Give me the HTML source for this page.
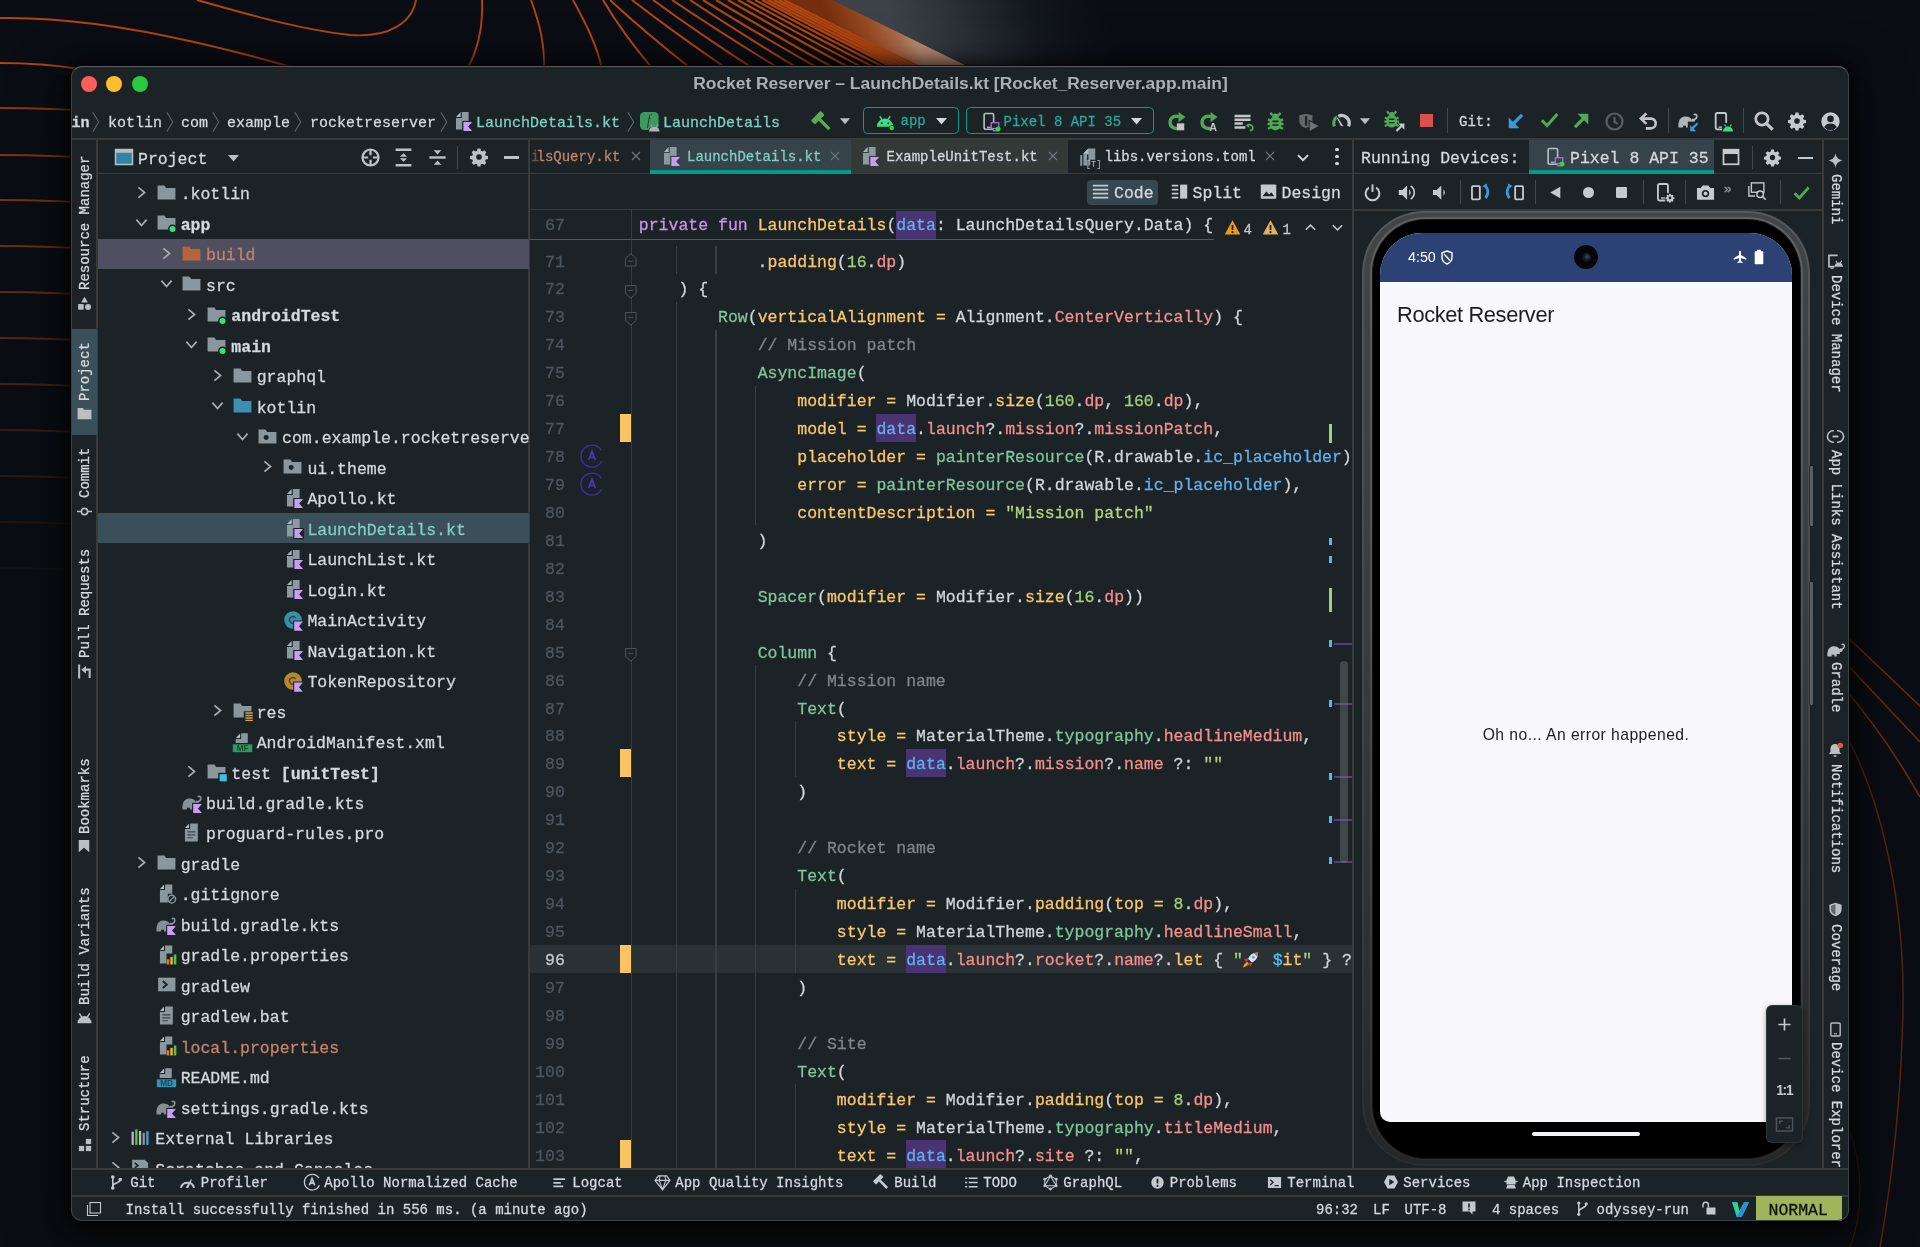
<!DOCTYPE html>
<html><head><meta charset="utf-8"><title>Rocket Reserver</title><style>
html,body{margin:0;padding:0}
body{width:1920px;height:1247px;overflow:hidden;background:#0a0d13;position:relative;font-family:"Liberation Mono", monospace;}
.t{position:absolute;white-space:pre;font-family:"Liberation Mono", monospace;-webkit-text-stroke:.28px currentColor;}
.s{position:absolute;white-space:pre;font-family:"Liberation Sans", sans-serif;}
.r{position:absolute;}
.i{position:absolute;overflow:visible}
#win{position:absolute;left:71.300px;top:66.200px;width:1777.800px;height:1155.200px;border-radius:11px;background:#1c2327;overflow:hidden;}
#in{position:absolute;left:-71.300px;top:-66.200px;width:1920px;height:1247px;will-change:transform;}
#winb{position:absolute;left:71.300px;top:66.200px;width:1777.800px;height:1155.200px;border-radius:11px;box-sizing:border-box;border:1.300px solid #3b4246;border-top-color:#585e62;pointer-events:none}
#shadow{position:absolute;left:71.300px;top:66.200px;width:1777.800px;height:1155.200px;border-radius:11px;box-shadow:0 18px 50px 10px rgba(0,0,0,.5),0 0 16px 5px rgba(0,0,0,.6),0 0 0 1px rgba(0,0,0,.75);}
b{font-weight:bold}
</style></head><body>
<svg class="i" style="left:0;top:0" width="1920" height="1247" viewBox="0 0 1920 1247">
<defs>
<linearGradient id="gsil" gradientUnits="userSpaceOnUse" x1="900" y1="40" x2="1090" y2="-30"><stop offset="0" stop-color="#3c4248"/><stop offset=".3" stop-color="#2a3036"/><stop offset=".65" stop-color="#13171e"/><stop offset="1" stop-color="#0a0d13"/></linearGradient>
<linearGradient id="gor" gradientUnits="userSpaceOnUse" x1="835" y1="40" x2="905" y2="14"><stop offset="0" stop-color="#742d0f"/><stop offset=".45" stop-color="#96481f"/><stop offset=".8" stop-color="#ab6b4b"/><stop offset="1" stop-color="#b88a70"/></linearGradient>
<linearGradient id="gfade" x1="0" y1="0" x2="0" y2="1"><stop offset="0" stop-color="#fff"/><stop offset=".45" stop-color="#fff" stop-opacity=".6"/><stop offset="1" stop-color="#fff" stop-opacity="0"/></linearGradient>
<mask id="mfade"><rect x="0" y="0" width="80" height="600" fill="url(#gfade)"/></mask>
<radialGradient id="gvig" cx=".5" cy=".5" r=".75"><stop offset=".7" stop-color="#000" stop-opacity="0"/><stop offset="1" stop-color="#000" stop-opacity=".25"/></radialGradient>
</defs>
<rect width="1920" height="1247" fill="#0a0e14"/>
<path d="M800 0 L960 70 L1230 70 L1150 0Z" fill="url(#gsil)"/>
<path d="M762 0 L895 70 L975 70 L832 0Z" fill="url(#gor)"/>
<path d="M603 0 Q622.3 33 653.6 70" fill="none" stroke="#b2440e" stroke-width="2.1"/>
<path d="M610 0 Q645.5 33 692.9 70" fill="none" stroke="#b2440e" stroke-width="2.1"/>
<path d="M632 0 Q674.5 33 728.9 70" fill="none" stroke="#b2440e" stroke-width="2.1"/>
<path d="M653 0 Q698.2 33 755.3 70" fill="none" stroke="#b2440e" stroke-width="2.1"/>
<path d="M672 0 Q720.9 33 781.8 70" fill="none" stroke="#b2440e" stroke-width="2.1"/>
<path d="M690 0 Q739.5 33 800.9 70" fill="none" stroke="#b2440e" stroke-width="2.1"/>
<path d="M703 0 Q756.2 33 821.5 70" fill="none" stroke="#b2440e" stroke-width="2.1"/>
<path d="M716 0 Q770.8 33 837.7 70" fill="none" stroke="#b2440e" stroke-width="2.1"/>
<path d="M728 0 Q785.0 33 854.0 70" fill="none" stroke="#b2440e" stroke-width="2.1"/>
<path d="M738 0 Q796.6 33 867.2 70" fill="none" stroke="#b2440e" stroke-width="2.1"/>
<path d="M747 0 Q807.2 33 879.5 70" fill="none" stroke="#b2440e" stroke-width="2.1"/>
<path d="M755 0 Q816.3 33 889.6 70" fill="none" stroke="#b2440e" stroke-width="2.1"/>
<path d="M762 0 Q824.4 33 898.8 70" fill="none" stroke="#b2440e" stroke-width="2.1"/>
<path d="M768 0 Q831.5 33 906.9 70" fill="none" stroke="#b2440e" stroke-width="2.1"/>
<path d="M774 0 Q838.0 33 914.0 70" fill="none" stroke="#b2440e" stroke-width="2.1"/>
<path d="M779 0 Q843.5 33 920.1 70" fill="none" stroke="#b2440e" stroke-width="2.1"/>
<path d="M784 0 Q849.1 33 926.2 70" fill="none" stroke="#b2440e" stroke-width="2.1"/>
<path d="M0 18 C60 17 120 25 194 42 S270 62 300 69" fill="none" stroke="#b2440e" stroke-width="1.9"/>
<path d="M197 0 C240 12 300 30 350 35 C390 38 412 22 416 0" fill="none" stroke="#b2440e" stroke-width="1.9"/>
<path d="M482 0 C483 25 478 50 467 69" fill="none" stroke="#b2440e" stroke-width="1.9"/>
<path d="M531 0 C540 25 545 45 544 69" fill="none" stroke="#b2440e" stroke-width="1.9"/>
<path d="M573 0 C585 22 597 45 602 69" fill="none" stroke="#b2440e" stroke-width="1.9"/>
<path d="M0 63 C30 63 55 65 80 69" fill="none" stroke="#b2440e" stroke-width="1.9"/>
<g mask="url(#mfade)">
<path d="M0 108 C30 108 50 109 80 110" fill="none" stroke="#a8400e" stroke-width="1.8"/>
<path d="M0 155 C30 155 50 156 80 157" fill="none" stroke="#a8400e" stroke-width="1.8"/>
<path d="M0 200 C30 200 50 201 80 202" fill="none" stroke="#a8400e" stroke-width="1.8"/>
<path d="M0 246 C30 246 50 247 80 248" fill="none" stroke="#a8400e" stroke-width="1.8"/>
<path d="M0 292 C30 292 50 293 80 294" fill="none" stroke="#a8400e" stroke-width="1.8"/>
<path d="M0 338 C30 338 50 339 80 340" fill="none" stroke="#a8400e" stroke-width="1.8"/>
<path d="M0 384 C30 384 50 385 80 386" fill="none" stroke="#a8400e" stroke-width="1.8"/>
<path d="M0 430 C30 430 50 431 80 432" fill="none" stroke="#a8400e" stroke-width="1.8"/>
<path d="M0 476 C30 476 50 477 80 478" fill="none" stroke="#a8400e" stroke-width="1.8"/>
<path d="M0 522 C30 522 50 523 80 524" fill="none" stroke="#a8400e" stroke-width="1.8"/>
<path d="M0 568 C30 568 50 569 80 570" fill="none" stroke="#a8400e" stroke-width="1.8"/>
</g>
<path d="M1840 630 L1920 706" fill="none" stroke="#6e2a0e" stroke-width="1.6"/>
<path d="M1840 657 L1920 742" fill="none" stroke="#6e2a0e" stroke-width="1.6"/>
<path d="M1840 683 Q1885 735 1920 797" fill="none" stroke="#6e2a0e" stroke-width="1.6"/>
<path d="M1840 725 C1880 790 1905 900 1903 1010 C1901 1100 1892 1180 1880 1247" fill="none" stroke="#6e2a0e" stroke-width="1.5" opacity=".8"/>
<path d="M1849 1130 C1865 1170 1862 1215 1850 1247" fill="none" stroke="#6e2a0e" stroke-width="1.2" opacity=".45"/>
</svg>
<div id="shadow"></div>
<div id="win"><div id="in">
<div class="r" style="left:80.9px;top:75.9px;width:16px;height:16px;border-radius:50%;background:#fe5f57"></div>
<div class="r" style="left:106.2px;top:75.9px;width:16px;height:16px;border-radius:50%;background:#febc2e"></div>
<div class="r" style="left:131.5px;top:75.9px;width:16px;height:16px;border-radius:50%;background:#28c840"></div>
<div class="s" style="left:72px;width:1777px;top:71.200px;height:24px;line-height:24px;text-align:center;font-size:17.400px;font-weight:bold;color:#aab0b4">Rocket Reserver – LaunchDetails.kt [Rocket_Reserver.app.main]</div>
<div class="t" style="left:72px;top:112.80px;height:22px;line-height:22px;font-size:15px;color:#d3d8dc;font-weight:bold;margin-left:-0.5px">in</div>
<svg class="i" style="left:91.9px;top:111.500px" width="8" height="20" viewBox="0 0 8 20"><path d="M.8 .3l5.900 9.700L.8 19.700" fill="none" stroke="#5b656b" stroke-width="1.100"/></svg>
<svg class="i" style="left:165.8px;top:111.500px" width="8" height="20" viewBox="0 0 8 20"><path d="M.8 .3l5.900 9.700L.8 19.700" fill="none" stroke="#5b656b" stroke-width="1.100"/></svg>
<svg class="i" style="left:211.6px;top:111.500px" width="8" height="20" viewBox="0 0 8 20"><path d="M.8 .3l5.900 9.700L.8 19.700" fill="none" stroke="#5b656b" stroke-width="1.100"/></svg>
<svg class="i" style="left:294.2px;top:111.500px" width="8" height="20" viewBox="0 0 8 20"><path d="M.8 .3l5.900 9.700L.8 19.700" fill="none" stroke="#5b656b" stroke-width="1.100"/></svg>
<svg class="i" style="left:439.9px;top:111.500px" width="8" height="20" viewBox="0 0 8 20"><path d="M.8 .3l5.900 9.700L.8 19.700" fill="none" stroke="#5b656b" stroke-width="1.100"/></svg>
<svg class="i" style="left:627.4px;top:111.500px" width="8" height="20" viewBox="0 0 8 20"><path d="M.8 .3l5.900 9.700L.8 19.700" fill="none" stroke="#5b656b" stroke-width="1.100"/></svg>
<div class="t" style="left:108px;top:112.80px;height:22px;line-height:22px;font-size:15px;color:#d3d8dc;">kotlin</div>
<div class="t" style="left:181px;top:112.80px;height:22px;line-height:22px;font-size:15px;color:#d3d8dc;">com</div>
<div class="t" style="left:227px;top:112.80px;height:22px;line-height:22px;font-size:15px;color:#d3d8dc;">example</div>
<div class="t" style="left:310px;top:112.80px;height:22px;line-height:22px;font-size:15px;color:#d3d8dc;">rocketreserver</div>
<svg class="i" style="left:456.20px;top:111.65px;" width="17" height="20" viewBox="0 0 17 20"><path d="M0 4.900L4.600 0V4.900z" fill="#aab6bd"/><path d="M5.800 0H12.600V9H6.400V17.600H0V6.100H5.800z" fill="#8d99a1"/><path d="M6.100 6.100V17.600" stroke="#7b8790" stroke-width=".8"/><path d="M6.300000000000001 8.9h10.6v11.4h-10.6z" fill="#1c2327"/><path d="M7.4 10h8.700l-3.900 4.550 3.900 4.550h-8.700z" fill="#c79df6"/></svg>
<div class="t" style="left:476px;top:112.80px;height:22px;line-height:22px;font-size:15px;color:#7fcfc4;">LaunchDetails.kt</div>
<svg class="i" style="left:639.50px;top:111.60px;" width="21" height="20" viewBox="0 0 21 20"><rect x="0" y="0" width="18.600" height="17.900" rx="4.200" fill="#3d9a5f"/><text x="8.600" y="13.200" font-family="Liberation Serif" font-size="14" font-style="italic" text-anchor="middle" fill="#1f4a30">f</text><path d="M7.800 20.500a6.400 6.400 0 0 1 12.800 0z" fill="#1c2327"/><path d="M9 19.600a5.300 5.300 0 0 1 10.600 0z" fill="#aab3b9"/><path d="M10.800 12.600l1.300 2.200M17.800 12.600l-1.300 2.200" stroke="#aab3b9" stroke-width="1"/></svg>
<div class="t" style="left:663px;top:112.80px;height:22px;line-height:22px;font-size:15px;color:#7fcfc4;">LaunchDetails</div>
<svg class="i" style="left:810.50px;top:111.30px;" width="22" height="22" viewBox="0 0 16 16"><g transform="rotate(-45 8 8)"><rect x="3" y="1.500" width="10" height="4.200" rx=".8" fill="#5bab4e"/><rect x="6.900" y="5.400" width="2.400" height="10" fill="#5bab4e"/></g></svg>
<svg class="i" style="left:840.0px;top:118px" width="10" height="6.5" viewBox="0 0 12 7"><path d="M0 0h12L6 7z" fill="#b9c0c4"/></svg>
<div class="r" style="left:863px;top:107px;width:96px;height:27px;box-sizing:border-box;border:1.800px solid #0b998a;border-radius:4.500px"></div>
<svg class="i" style="left:875.00px;top:111.00px;" width="20" height="20" viewBox="0 0 16 16"><path d="M1.500 12.500a6.500 6.500 0 0 1 13 0z" fill="#3ddc84"/><path d="M3.800 4.200l1.700 2.600M12.200 4.200l-1.700 2.600" stroke="#3ddc84" stroke-width="1.100"/><circle cx="5.400" cy="9.800" r=".8" fill="#1c2327"/><circle cx="10.600" cy="9.800" r=".8" fill="#1c2327"/><circle cx="13.400" cy="13.600" r="2.300" fill="#1c2327"/><circle cx="13.400" cy="13.600" r="1.800" fill="#20e030"/></svg>
<div class="t" style="left:900.5px;top:111.30px;height:21px;line-height:21px;font-size:14px;color:#2aa79a;">app</div>
<svg class="i" style="left:935.5px;top:118px" width="11" height="6.5" viewBox="0 0 12 7"><path d="M0 0h12L6 7z" fill="#d3d8dc"/></svg>
<div class="r" style="left:966px;top:107px;width:188px;height:27px;box-sizing:border-box;border:1.800px solid #0b998a;border-radius:4.500px"></div>
<svg class="i" style="left:980.50px;top:112.30px;" width="20" height="20" viewBox="0 0 16 16"><rect x="2.500" y="1.200" width="7.600" height="12.600" rx="1.200" fill="none" stroke="#b4bec5" stroke-width="1.300"/><path d="M4.800 12.200h3" stroke="#b4bec5" stroke-width="1"/><rect x="8.200" y="8.600" width="6" height="4.600" fill="#1c2327" stroke="#b06fe0" stroke-width="1"/><path d="M9.400 15h3.600" stroke="#b06fe0" stroke-width="1"/><circle cx="13.600" cy="13.600" r="2" fill="#20e030"/></svg>
<div class="t" style="left:1003.5px;top:111.60px;height:21px;line-height:21px;font-size:14px;color:#2aa79a;">Pixel 8 API 35</div>
<svg class="i" style="left:1131.0px;top:118px" width="11" height="6.5" viewBox="0 0 12 7"><path d="M0 0h12L6 7z" fill="#d3d8dc"/></svg>
<svg class="i" style="left:1165.90px;top:110.60px;" width="21" height="21" viewBox="0 0 16 16"><path d="M9.700 4.300A4.700 4.700 0 1 0 9.600 12.900" fill="none" stroke="#4fa955" stroke-width="2.500"/><path d="M9.500 .800l5.400 3.850-5.400 3.850z" fill="#4fa955"/><rect x="8.300" y="9.400" width="5.600" height="5.300" fill="#c3c6c8"/></svg>
<svg class="i" style="left:1197.90px;top:110.60px;" width="21" height="21" viewBox="0 0 16 16"><path d="M9.700 4.300A4.700 4.700 0 1 0 9.600 12.900" fill="none" stroke="#4fa955" stroke-width="2.500"/><path d="M9.500 .800l5.400 3.850-5.400 3.850z" fill="#4fa955"/><text x="11.600" y="15" font-family="Liberation Sans" font-weight="bold" font-size="8.200" text-anchor="middle" fill="#c3c6c8">A</text></svg>
<svg class="i" style="left:1232.50px;top:110.50px;" width="21" height="21" viewBox="0 0 16 16"><path d="M1.150 3.900h12.200M1.150 6.700h12.200M1.150 9.600h6.300M1.150 12.500h8.300" stroke="#c3c6c8" stroke-width="1.900"/><path d="M10.800 10.900c2.200-1.100 4.300.100 4.300 1.900 0 1.300-1 2.200-2.300 2.200" fill="none" stroke="#4fa955" stroke-width="1.300"/><path d="M9.600 11.300l2.700-1.900v3.400z" fill="#4fa955"/></svg>
<svg class="i" style="left:1264.80px;top:110.50px;" width="21" height="21" viewBox="0 0 16 16"><ellipse cx="8" cy="9.400" rx="4.500" ry="5.400" fill="#4fa955"/><path d="M5.300 4.600a2.700 2.700 0 0 1 5.400 0z" fill="#4fa955"/><path d="M5.600 3.200L4.200 1.300M10.400 3.200l1.400-1.900M2.300 6.400l2.500 1.100M13.700 6.400l-2.500 1.100M1.900 9.900h2.800M14.100 9.900h-2.800M2.300 13.500l2.500-1.200M13.700 13.500l-2.500-1.200" stroke="#4fa955" stroke-width="1.800" fill="none"/><path d="M5.700 7.900h4.600M5.700 10.700h4.600" stroke="#1c2327" stroke-width="1.200"/></svg>
<svg class="i" style="left:1297.50px;top:110.50px;" width="21" height="21" viewBox="0 0 16 16"><path d="M1 3.200L6 2.100l5 1.100V7.500C11 10.200 9 12.200 6 13 3 12.200 1 10.200 1 7.500z" fill="#63686b"/><path d="M5.300 3.800h1.700v7.400H5.300z" fill="#1c2327"/><path d="M8.100 6.500l8.600 5-8.600 5z" fill="#1c2327"/><path d="M8.900 7.800l6.700 3.700-6.700 3.700z" fill="#6e7376"/></svg>
<svg class="i" style="left:1330.50px;top:110.50px;" width="21" height="21" viewBox="0 0 16 16"><path d="M2.630 11.660A5.870 5.870 0 0 1 4.630 4.490" fill="none" stroke="#4fa955" stroke-width="2.500"/><path d="M5.610 3.940A5.870 5.870 0 0 1 13.370 11.660" fill="none" stroke="#c3c6c8" stroke-width="2.500"/><path d="M7.500 11.900L4.200 5.400l1.100-.600 4.500 7.100z" fill="#c3c6c8" stroke="#1c2327" stroke-width=".5"/></svg>
<svg class="i" style="left:1360.0px;top:118px" width="10" height="6.5" viewBox="0 0 12 7"><path d="M0 0h12L6 7z" fill="#b9c0c4"/></svg>
<svg class="i" style="left:1384.00px;top:110.50px;" width="21" height="21" viewBox="0 0 16 16"><g transform="translate(-1.500 -1) scale(.92)"><ellipse cx="8" cy="9.400" rx="4.500" ry="5.400" fill="#4fa955"/><path d="M5.300 4.600a2.700 2.700 0 0 1 5.400 0z" fill="#4fa955"/><path d="M5.600 3.200L4.200 1.300M10.400 3.200l1.400-1.900M2.300 6.400l2.500 1.100M13.700 6.400l-2.500 1.100M1.900 9.900h2.800M14.100 9.900h-2.800M2.300 13.500l2.500-1.200M13.700 13.500l-2.500-1.200" stroke="#4fa955" stroke-width="1.800" fill="none"/><path d="M5.700 7.900h4.600M5.700 10.700h4.600" stroke="#1c2327" stroke-width="1.200"/></g><path d="M8.800 8.300h7.200V16H8.800z" fill="#1c2327" opacity=".0"/><path d="M9.500 15.300l4.800-4.800" stroke="#c3c9cd" stroke-width="1.700"/><path d="M10.800 9.600h4.700v4.700z" fill="#c3c9cd"/></svg>
<div class="r" style="left:1419.5px;top:113.8px;width:13.2px;height:13.2px;background:#d9514c;"></div>
<div class="r" style="left:1446.5px;top:108px;width:1px;height:25px;background:#45484a;"></div>
<div class="t" style="left:1459px;top:111.60px;height:21px;line-height:21px;font-size:14px;color:#d3d8dc;">Git:</div>
<svg class="i" style="left:1504.50px;top:110.50px;" width="21" height="21" viewBox="0 0 16 16"><path d="M13 3L4.500 11.500" stroke="#3b9ad6" stroke-width="2.500"/><path d="M2.800 5V13.200H11z" fill="#3b9ad6"/></svg>
<svg class="i" style="left:1538.50px;top:109.00px;" width="21" height="21" viewBox="0 0 16 16"><path d="M2.200 8.600l4 4L14 3.800" fill="none" stroke="#4fa955" stroke-width="2.300"/></svg>
<svg class="i" style="left:1570.50px;top:109.70px;" width="21" height="21" viewBox="0 0 16 16"><path d="M3 13L11.500 4.500" stroke="#4fa955" stroke-width="2.500"/><path d="M5 2.800h8.200V11z" fill="#4fa955"/></svg>
<svg class="i" style="left:1603.50px;top:110.50px;" width="21" height="21" viewBox="0 0 16 16"><circle cx="8" cy="8" r="6.100" fill="none" stroke="#585d61" stroke-width="1.700"/><path d="M8 4.500V8.300l2.500 1.500" fill="none" stroke="#585d61" stroke-width="1.700"/></svg>
<svg class="i" style="left:1637.50px;top:110.50px;" width="21" height="21" viewBox="0 0 16 16"><path d="M3.500 5.800h6.300a3.700 3.700 0 0 1 0 7.400H6" fill="none" stroke="#c3c6c8" stroke-width="2"/><path d="M6.400 1.800L2.200 5.800l4.200 4" fill="none" stroke="#c3c6c8" stroke-width="2"/></svg>
<div class="r" style="left:1667.5px;top:108px;width:1px;height:25px;background:#45484a;"></div>
<svg class="i" style="left:1678.40px;top:113.00px;" width="22" height="19" viewBox="0 0 22 19"><path d="M.500 14.600C0 8.500 2 4 7 3.600c3-.200 5.600 1 6.600 3l3.200-.400c.800 1.800-.200 3.400-2 3.600l-.800-.200V12h-3.500v2.600H8v-2.100c-1 .4-2 .4-3 0v2.100z" fill="#b0b5b8"/><path d="M14 6.700c2.200.100 4.600-.900 4.800-3.200.200-1.900-1.700-2.800-3-1.600" fill="none" stroke="#b0b5b8" stroke-width="1.700"/><path d="M9.800 8.600h11.500v10H9.800z" fill="#1c2327"/><path d="M19.600 10.200l-5.200 5.200" stroke="#3b9ad6" stroke-width="2.200"/><path d="M12.200 12.200v6h6z" fill="#3b9ad6"/></svg>
<svg class="i" style="left:1712.00px;top:110.50px;" width="21" height="21" viewBox="0 0 16 16"><rect x="2.800" y="1.500" width="8" height="12.500" rx="1.200" fill="none" stroke="#c3c9cd" stroke-width="1.400"/><path d="M5 12.300h3.500" stroke="#c3c9cd" stroke-width="1"/><path d="M7.600 9h8.400v7H7.600z" fill="#1c2327"/><path d="M8.400 15.600a3.800 3.800 0 0 1 7.600 0z" fill="#3ddc84"/><path d="M9.600 10.300l1 1.500M14.800 10.300l-1 1.500" stroke="#3ddc84" stroke-width=".9"/></svg>
<div class="r" style="left:1742.5px;top:108px;width:1px;height:25px;background:#45484a;"></div>
<svg class="i" style="left:1752.50px;top:110.00px;" width="21" height="21" viewBox="0 0 16 16"><circle cx="6.800" cy="6.800" r="4.700" fill="none" stroke="#c3c6c8" stroke-width="2.100"/><path d="M10.300 10.300l4.700 4.700" stroke="#c3c6c8" stroke-width="2.400"/></svg>
<svg class="i" style="left:1788.00px;top:111.70px;" width="18" height="18" viewBox="0 0 16 16"><path fill-rule="evenodd" d="M6.700 1h2.600l.4 2 1.300.600 1.700-1.100 1.800 1.800-1.100 1.700.6 1.300 2 .4v2.600l-2 .4-.6 1.300 1.100 1.700-1.800 1.800-1.700-1.100-1.300.6-.4 2H6.700l-.4-2L5 14.400l-1.700 1.100-1.800-1.800 1.100-1.700L2 10.700l-2-.4V7.700l2-.4.6-1.300-1.100-1.700 1.800-1.800L5 3.600 6.300 3zM8 6a2.500 2.500 0 1 0 0 5 2.500 2.500 0 0 0 0-5z" fill="#c3c9cd" transform="translate(0 -.5)"/></svg>
<svg class="i" style="left:1819.50px;top:110.50px;" width="21" height="21" viewBox="0 0 16 16"><circle cx="8" cy="8" r="7" fill="#c3c9cd"/><circle cx="8" cy="6" r="2.500" fill="#1c2327"/><path d="M3.200 12.300c1-2 2.700-2.800 4.800-2.800s3.800.8 4.800 2.800A6.200 6.200 0 0 1 8 14.600a6.200 6.200 0 0 1-4.800-2.300z" fill="#1c2327"/></svg>
<div class="r" style="left:72px;top:138.3px;width:1777px;height:1.6px;background:#393a3a;"></div>
<div class="r" style="left:96.3px;top:140px;width:1.6px;height:1028px;background:#393a3a;"></div>
<div class="r" style="left:72px;top:329px;width:25px;height:106px;background:#3b4f59;"></div>
<div class="t" style="left:84.5px;top:289.5px;height:20px;line-height:20px;margin-top:-10px;font-size:14px;color:#d3d8dc;transform-origin:0 50%;transform:rotate(-90deg)">Resource Manager</div>
<svg class="i" style="left:76.80px;top:295.70px;" width="15" height="15" viewBox="0 0 16 16"><path d="M8 .8l3.600 6.200h-7.200z" fill="#b9bfc3"/><rect x="1.200" y="8.600" width="6" height="6" fill="#b9bfc3"/><circle cx="11.800" cy="11.600" r="3.200" fill="#b9bfc3"/></svg>
<div class="t" style="left:84.5px;top:401px;height:20px;line-height:20px;margin-top:-10px;font-size:14px;color:#d3d8dc;transform-origin:0 50%;transform:rotate(-90deg)">Project</div>
<svg class="i" style="left:76.90px;top:405.80px;" width="15" height="15" viewBox="0 0 16 16"><path d="M.600 2h5.600l1.500 2H15.400v10H.600z" fill="#b9bfc3"/></svg>
<div class="t" style="left:84.5px;top:497.5px;height:20px;line-height:20px;margin-top:-10px;font-size:14px;color:#d3d8dc;transform-origin:0 50%;transform:rotate(-90deg)">Commit</div>
<svg class="i" style="left:77.00px;top:503.50px;" width="15" height="15" viewBox="0 0 16 16"><circle cx="8" cy="8" r="3.300" fill="none" stroke="#b9bfc3" stroke-width="1.700"/><path d="M0 8h4.500M11.500 8H16" stroke="#b9bfc3" stroke-width="1.700"/></svg>
<div class="t" style="left:84.5px;top:658px;height:20px;line-height:20px;margin-top:-10px;font-size:14px;color:#d3d8dc;transform-origin:0 50%;transform:rotate(-90deg)">Pull Requests</div>
<svg class="i" style="left:77.00px;top:663.50px;" width="15" height="15" viewBox="0 0 16 16"><path d="M2.300 .500v15" stroke="#b9bfc3" stroke-width="2.200"/><path d="M4.500 6L9.500 2v8z" fill="#b9bfc3"/><path d="M8.500 6h5v9" fill="none" stroke="#b9bfc3" stroke-width="2.200"/></svg>
<div class="t" style="left:84.5px;top:834px;height:20px;line-height:20px;margin-top:-10px;font-size:14px;color:#d3d8dc;transform-origin:0 50%;transform:rotate(-90deg)">Bookmarks</div>
<svg class="i" style="left:77.40px;top:839.00px;" width="14" height="14" viewBox="0 0 16 16"><path d="M2 1h12v14l-6-5-6 5z" fill="#b9bfc3"/></svg>
<div class="t" style="left:84.5px;top:1005px;height:20px;line-height:20px;margin-top:-10px;font-size:14px;color:#d3d8dc;transform-origin:0 50%;transform:rotate(-90deg)">Build Variants</div>
<svg class="i" style="left:77.00px;top:1009.80px;" width="15" height="15" viewBox="0 0 16 16"><path d="M.500 14a7.500 7.500 0 0 1 15 0z" fill="#b9bfc3"/><path d="M2.500 3.500l2.500 4M13.500 3.500l-2.500 4" stroke="#b9bfc3" stroke-width="1.500"/></svg>
<div class="t" style="left:84.5px;top:1131px;height:20px;line-height:20px;margin-top:-10px;font-size:14px;color:#d3d8dc;transform-origin:0 50%;transform:rotate(-90deg)">Structure</div>
<svg class="i" style="left:77.50px;top:1138.00px;" width="14" height="14" viewBox="0 0 16 16"><rect x="1" y="9" width="6" height="6" fill="#b9bfc3"/><rect x="9" y="9" width="6" height="6" fill="#b9bfc3"/><rect x="9" y="1" width="6" height="6" fill="#b9bfc3"/></svg>
<div class="r" style="left:1822.3px;top:140px;width:1.6px;height:1028px;background:#393a3a;"></div>
<svg class="i" style="left:1827.80px;top:152.80px;" width="15" height="15" viewBox="0 0 16 16"><path d="M8 0c.6 4.600 2.900 7.200 8 8-5.100.8-7.400 3.400-8 8C7.400 11.400 5.100 8.800 0 8 5.100 7.200 7.400 4.600 8 0z" fill="#b9bfc3"/></svg>
<div class="t" style="left:1835.5px;top:174px;height:20px;line-height:20px;margin-top:-10px;font-size:14px;color:#d3d8dc;transform-origin:0 50%;transform:rotate(90deg)">Gemini</div>
<svg class="i" style="left:1826.30px;top:252.50px;" width="17" height="17" viewBox="0 0 16 16"><path d="M11 2.200H2.800v10.600H8" fill="none" stroke="#b9bfc3" stroke-width="1.600"/><path d="M4.200 14.200h3" stroke="#b9bfc3" stroke-width="1.300"/><path d="M8 13a4 4 0 0 1 8 0z" fill="#b9bfc3"/><path d="M9.300 7.200l1.300 2.200M14.700 7.200l-1.300 2.200" stroke="#b9bfc3" stroke-width="1"/></svg>
<div class="t" style="left:1835.5px;top:274.6px;height:20px;line-height:20px;margin-top:-10px;font-size:14px;color:#d3d8dc;transform-origin:0 50%;transform:rotate(90deg)">Device Manager</div>
<svg class="i" style="left:1826.90px;top:428.20px;" width="17" height="17" viewBox="0 0 16 16"><path d="M6.500 2.600H5.800A5.400 5.400 0 0 0 5.800 13.400H6.500M9.500 2.600h.7a5.400 5.400 0 0 1 0 10.800H9.500" fill="none" stroke="#b9bfc3" stroke-width="1.500"/><path d="M5.300 8h5.400" stroke="#b9bfc3" stroke-width="1.800"/></svg>
<div class="t" style="left:1835.5px;top:449.6px;height:20px;line-height:20px;margin-top:-10px;font-size:14px;color:#d3d8dc;transform-origin:0 50%;transform:rotate(90deg)">App Links Assistant</div>
<svg class="i" style="left:1826.50px;top:642.50px;transform:scale(.92);transform-origin:0 0" width="20" height="16" viewBox="0 0 20 16"><path d="M.500 14.600C0 8.500 2 4 7 3.600c3-.200 5.600 1 6.600 3l3.200-.400c.800 1.800-.200 3.400-2 3.600l-.800-.200V12h-3.500v2.600H8v-2.100c-1 .4-2 .4-3 0v2.100z" fill="#b9bfc3"/><path d="M14 6.700c2.200.100 4.600-.900 4.800-3.200.200-1.900-1.700-2.800-3-1.600" fill="none" stroke="#b9bfc3" stroke-width="1.500"/></svg>
<div class="t" style="left:1835.5px;top:661.5px;height:20px;line-height:20px;margin-top:-10px;font-size:14px;color:#d3d8dc;transform-origin:0 50%;transform:rotate(90deg)">Gradle</div>
<svg class="i" style="left:1827.50px;top:741.50px;" width="16" height="16" viewBox="0 0 16 16"><path d="M7 2a4.500 4.500 0 0 1 4.500 4.500v3l1.500 2.500H1l1.500-2.500v-3A4.500 4.500 0 0 1 7 2zM5.300 13.200h3.400a1.700 1.700 0 0 1-3.400 0z" fill="#b9bfc3"/><circle cx="12.300" cy="3.400" r="2.700" fill="#e5534b"/></svg>
<div class="t" style="left:1835.5px;top:763.5px;height:20px;line-height:20px;margin-top:-10px;font-size:14px;color:#d3d8dc;transform-origin:0 50%;transform:rotate(90deg)">Notifications</div>
<svg class="i" style="left:1828.00px;top:901.50px;" width="15" height="15" viewBox="0 0 16 16"><path d="M8 .800l6.500 2.200v5c0 3.500-2.700 6.200-6.500 7.200-3.800-1-6.500-3.700-6.500-7.200V3z" fill="#b9bfc3"/><path d="M8 2.400v11.400c-2.700-.9-4.800-2.900-4.800-5.800V4.100z" fill="#1c2327" opacity=".55"/></svg>
<div class="t" style="left:1835.5px;top:923.5px;height:20px;line-height:20px;margin-top:-10px;font-size:14px;color:#d3d8dc;transform-origin:0 50%;transform:rotate(90deg)">Coverage</div>
<svg class="i" style="left:1828.00px;top:1021.50px;" width="15" height="15" viewBox="0 0 16 16"><rect x="3" y="1" width="10" height="14" rx="1.200" fill="none" stroke="#b9bfc3" stroke-width="1.500"/><path d="M6.300 12.600h3.400" stroke="#b9bfc3" stroke-width="1.100"/></svg>
<div class="t" style="left:1835.5px;top:1042px;height:20px;line-height:20px;margin-top:-10px;font-size:14px;color:#d3d8dc;transform-origin:0 50%;transform:rotate(90deg)">Device Explorer</div>
<svg class="i" style="left:114.00px;top:146.50px;" width="20" height="20" viewBox="0 0 16 16"><rect x="1.200" y="2" width="13.600" height="12" fill="#2f85a8" stroke="#b4bec5" stroke-width="1.200"/><rect x="1.200" y="2" width="13.600" height="2.600" fill="#b4bec5"/></svg>
<div class="t" style="left:138px;top:146.80px;height:25px;line-height:25px;font-size:16.5px;color:#d3d8dc;">Project</div>
<svg class="i" style="left:228.0px;top:154.5px" width="11" height="6.5" viewBox="0 0 12 7"><path d="M0 0h12L6 7z" fill="#b9c0c4"/></svg>
<svg class="i" style="left:360.00px;top:146.50px;" width="21" height="21" viewBox="0 0 16 16"><circle cx="8" cy="8" r="6.100" fill="none" stroke="#bcc1c4" stroke-width="1.700"/><path d="M8 1.800v4.400M8 9.800v4.400M1.800 8h4.400M9.800 8h4.400" stroke="#bcc1c4" stroke-width="1.700"/></svg>
<svg class="i" style="left:393.00px;top:146.50px;" width="21" height="21" viewBox="0 0 16 16"><path d="M2 2.100h12M2 13.900h12" stroke="#bcc1c4" stroke-width="1.800"/><path d="M8 4.800l2.800 2.600H5.200zM8 11.200l2.800-2.600H5.200z" fill="#bcc1c4"/></svg>
<svg class="i" style="left:426.50px;top:146.50px;" width="21" height="21" viewBox="0 0 16 16"><path d="M1.800 8h12.400" stroke="#bcc1c4" stroke-width="1.800"/><path d="M8 5.800l2.900-3.300H5.100zM8 10.200l2.900 3.300H5.100z" fill="#bcc1c4"/></svg>
<div class="r" style="left:457px;top:146px;width:1px;height:23px;background:#45484a;"></div>
<svg class="i" style="left:469.50px;top:148.00px;" width="18" height="18" viewBox="0 0 16 16"><path fill-rule="evenodd" d="M6.700 1h2.600l.4 2 1.300.600 1.700-1.100 1.800 1.800-1.100 1.700.6 1.300 2 .4v2.600l-2 .4-.6 1.300 1.100 1.700-1.800 1.800-1.700-1.100-1.300.6-.4 2H6.700l-.4-2L5 14.400l-1.700 1.100-1.800-1.800 1.100-1.700L2 10.700l-2-.4V7.700l2-.4.6-1.300-1.100-1.700 1.800-1.800L5 3.600 6.300 3zM8 6a2.500 2.500 0 1 0 0 5 2.500 2.500 0 0 0 0-5z" fill="#bcc1c4" transform="translate(0 -.5)"/></svg>
<div class="r" style="left:503.5px;top:156.3px;width:15.5px;height:2.4px;background:#bcc1c4;"></div>
<div class="r" style="left:98px;top:172.9px;width:431px;height:1.3px;background:#393a3a;"></div>
<div class="r" style="left:528.2px;top:140px;width:1.6px;height:1028px;background:#393a3a;"></div>
<div class="r" style="left:98px;top:238.82000000000002px;width:430.5px;height:29.98px;background:#504f5f;"></div>
<div class="r" style="left:98px;top:513.14px;width:430.5px;height:29.98px;background:#3b4f59;"></div>
<div class="r" style="left:98px;top:174px;width:430.500px;height:994px;overflow:hidden"><div class="r" style="left:-98px;top:-174px;width:1920px;height:1247px">
<svg class="i" style="left:131.65px;top:182.80px;" width="19" height="19" viewBox="0 0 16 16"><path d="M5.400 3.700l5.200 4.300-5.200 4.300" fill="none" stroke="#a9aeb1" stroke-width="1.400"/></svg>
<svg class="i" style="left:155.65px;top:181.80px;" width="21" height="21" viewBox="0 0 16 16"><path d="M1.2 2.6h5.2l1.3 1.9H14.8v8.9H1.2z" fill="#8b979e"/></svg>
<div class="t" style="left:180.65px;top:182.40px;height:25px;line-height:25px;font-size:16.5px;color:#d3d8dc;">.kotlin</div>
<svg class="i" style="left:131.65px;top:213.28px;" width="19" height="19" viewBox="0 0 16 16"><path d="M3.700 5.600l4.300 5 4.300-5" fill="none" stroke="#a9aeb1" stroke-width="1.400"/></svg>
<svg class="i" style="left:155.65px;top:212.28px;" width="21" height="21" viewBox="0 0 16 16"><path d="M1.2 2.6h5.2l1.3 1.9H14.8v8.9H1.2z" fill="#8b979e"/><circle cx="12.6" cy="12.9" r="3.4" fill="#1c2327"/><circle cx="12.6" cy="12.9" r="2.3" fill="#3ddc84"/></svg>
<div class="t" style="left:180.65px;top:212.88px;height:25px;line-height:25px;font-size:16.5px;color:#d3d8dc;font-weight:bold">app</div>
<svg class="i" style="left:157.00px;top:243.76px;" width="19" height="19" viewBox="0 0 16 16"><path d="M5.400 3.700l5.200 4.300-5.200 4.300" fill="none" stroke="#a9aeb1" stroke-width="1.400"/></svg>
<svg class="i" style="left:181.00px;top:242.76px;" width="21" height="21" viewBox="0 0 16 16"><path d="M1.2 2.6h5.2l1.3 1.9H14.8v8.9H1.2z" fill="#b7633b"/></svg>
<div class="t" style="left:206.0px;top:243.36px;height:25px;line-height:25px;font-size:16.5px;color:#c5826a;">build</div>
<svg class="i" style="left:157.00px;top:274.24px;" width="19" height="19" viewBox="0 0 16 16"><path d="M3.700 5.600l4.300 5 4.300-5" fill="none" stroke="#a9aeb1" stroke-width="1.400"/></svg>
<svg class="i" style="left:181.00px;top:273.24px;" width="21" height="21" viewBox="0 0 16 16"><path d="M1.2 2.6h5.2l1.3 1.9H14.8v8.9H1.2z" fill="#8b979e"/></svg>
<div class="t" style="left:206.0px;top:273.84px;height:25px;line-height:25px;font-size:16.5px;color:#d3d8dc;">src</div>
<svg class="i" style="left:182.35px;top:304.72px;" width="19" height="19" viewBox="0 0 16 16"><path d="M5.400 3.700l5.200 4.300-5.200 4.300" fill="none" stroke="#a9aeb1" stroke-width="1.400"/></svg>
<svg class="i" style="left:206.35px;top:303.72px;" width="21" height="21" viewBox="0 0 16 16"><path d="M1.2 2.6h5.2l1.3 1.9H14.8v8.9H1.2z" fill="#8b979e"/><circle cx="12.6" cy="12.9" r="3.4" fill="#1c2327"/><circle cx="12.6" cy="12.9" r="2.3" fill="#3ddc84"/></svg>
<div class="t" style="left:231.35000000000002px;top:304.32px;height:25px;line-height:25px;font-size:16.5px;color:#d3d8dc;font-weight:bold">androidTest</div>
<svg class="i" style="left:182.35px;top:335.20px;" width="19" height="19" viewBox="0 0 16 16"><path d="M3.700 5.600l4.300 5 4.300-5" fill="none" stroke="#a9aeb1" stroke-width="1.400"/></svg>
<svg class="i" style="left:206.35px;top:334.20px;" width="21" height="21" viewBox="0 0 16 16"><path d="M1.2 2.6h5.2l1.3 1.9H14.8v8.9H1.2z" fill="#8b979e"/><circle cx="12.6" cy="12.9" r="3.4" fill="#1c2327"/><circle cx="12.6" cy="12.9" r="2.3" fill="#3ddc84"/></svg>
<div class="t" style="left:231.35000000000002px;top:334.80px;height:25px;line-height:25px;font-size:16.5px;color:#d3d8dc;font-weight:bold">main</div>
<svg class="i" style="left:207.70px;top:365.68px;" width="19" height="19" viewBox="0 0 16 16"><path d="M5.400 3.700l5.200 4.300-5.200 4.300" fill="none" stroke="#a9aeb1" stroke-width="1.400"/></svg>
<svg class="i" style="left:231.70px;top:364.68px;" width="21" height="21" viewBox="0 0 16 16"><path d="M1.2 2.6h5.2l1.3 1.9H14.8v8.9H1.2z" fill="#8b979e"/></svg>
<div class="t" style="left:256.70000000000005px;top:365.28px;height:25px;line-height:25px;font-size:16.5px;color:#d3d8dc;">graphql</div>
<svg class="i" style="left:207.70px;top:396.16px;" width="19" height="19" viewBox="0 0 16 16"><path d="M3.700 5.600l4.300 5 4.300-5" fill="none" stroke="#a9aeb1" stroke-width="1.400"/></svg>
<svg class="i" style="left:231.70px;top:395.16px;" width="21" height="21" viewBox="0 0 16 16"><path d="M1.2 2.6h5.2l1.3 1.9H14.8v8.9H1.2z" fill="#3a8fb3"/></svg>
<div class="t" style="left:256.70000000000005px;top:395.76px;height:25px;line-height:25px;font-size:16.5px;color:#d3d8dc;">kotlin</div>
<svg class="i" style="left:233.05px;top:426.64px;" width="19" height="19" viewBox="0 0 16 16"><path d="M3.700 5.600l4.300 5 4.300-5" fill="none" stroke="#a9aeb1" stroke-width="1.400"/></svg>
<svg class="i" style="left:257.05px;top:425.64px;" width="21" height="21" viewBox="0 0 16 16"><path d="M1.2 2.6h5.2l1.3 1.9H14.8v8.9H1.2z" fill="#8b979e"/><circle cx="7" cy="8.8" r="1.9" fill="#1c2327"/></svg>
<div class="t" style="left:282.05px;top:426.24px;height:25px;line-height:25px;font-size:16.5px;color:#d3d8dc;">com.example.rocketreserver</div>
<svg class="i" style="left:258.40px;top:457.12px;" width="19" height="19" viewBox="0 0 16 16"><path d="M5.400 3.700l5.200 4.300-5.200 4.300" fill="none" stroke="#a9aeb1" stroke-width="1.400"/></svg>
<svg class="i" style="left:282.40px;top:456.12px;" width="21" height="21" viewBox="0 0 16 16"><path d="M1.2 2.6h5.2l1.3 1.9H14.8v8.9H1.2z" fill="#8b979e"/><circle cx="7" cy="8.8" r="1.9" fill="#1c2327"/></svg>
<div class="t" style="left:307.40000000000003px;top:456.72px;height:25px;line-height:25px;font-size:16.5px;color:#d3d8dc;">ui.theme</div>
<svg class="i" style="left:287.20px;top:488.90px;" width="17" height="20" viewBox="0 0 17 20"><path d="M0 4.900L4.600 0V4.900z" fill="#aab6bd"/><path d="M5.800 0H12.600V9H6.400V17.600H0V6.100H5.800z" fill="#8d99a1"/><path d="M6.100 6.100V17.600" stroke="#7b8790" stroke-width=".8"/><path d="M6.300000000000001 8.9h10.6v11.4h-10.6z" fill="#1c2327"/><path d="M7.4 10h8.700l-3.900 4.550 3.900 4.550h-8.700z" fill="#c79df6"/></svg>
<div class="t" style="left:307.40000000000003px;top:487.20px;height:25px;line-height:25px;font-size:16.5px;color:#d3d8dc;">Apollo.kt</div>
<svg class="i" style="left:287.20px;top:519.38px;" width="17" height="20" viewBox="0 0 17 20"><path d="M0 4.900L4.600 0V4.900z" fill="#aab6bd"/><path d="M5.800 0H12.600V9H6.400V17.600H0V6.100H5.800z" fill="#8d99a1"/><path d="M6.100 6.100V17.600" stroke="#7b8790" stroke-width=".8"/><path d="M6.300000000000001 8.9h10.6v11.4h-10.6z" fill="#1c2327"/><path d="M7.4 10h8.700l-3.900 4.550 3.900 4.550h-8.700z" fill="#c79df6"/></svg>
<div class="t" style="left:307.40000000000003px;top:517.68px;height:25px;line-height:25px;font-size:16.5px;color:#7fcfc4;">LaunchDetails.kt</div>
<svg class="i" style="left:287.20px;top:549.86px;" width="17" height="20" viewBox="0 0 17 20"><path d="M0 4.900L4.600 0V4.900z" fill="#aab6bd"/><path d="M5.800 0H12.600V9H6.400V17.600H0V6.100H5.800z" fill="#8d99a1"/><path d="M6.100 6.100V17.600" stroke="#7b8790" stroke-width=".8"/><path d="M6.300000000000001 8.9h10.6v11.4h-10.6z" fill="#1c2327"/><path d="M7.4 10h8.700l-3.900 4.550 3.900 4.550h-8.700z" fill="#c79df6"/></svg>
<div class="t" style="left:307.40000000000003px;top:548.16px;height:25px;line-height:25px;font-size:16.5px;color:#d3d8dc;">LaunchList.kt</div>
<svg class="i" style="left:287.20px;top:580.34px;" width="17" height="20" viewBox="0 0 17 20"><path d="M0 4.900L4.600 0V4.900z" fill="#aab6bd"/><path d="M5.800 0H12.600V9H6.400V17.600H0V6.100H5.800z" fill="#8d99a1"/><path d="M6.100 6.100V17.600" stroke="#7b8790" stroke-width=".8"/><path d="M6.300000000000001 8.9h10.6v11.4h-10.6z" fill="#1c2327"/><path d="M7.4 10h8.700l-3.900 4.550 3.900 4.550h-8.700z" fill="#c79df6"/></svg>
<div class="t" style="left:307.40000000000003px;top:578.64px;height:25px;line-height:25px;font-size:16.5px;color:#d3d8dc;">Login.kt</div>
<svg class="i" style="left:284.20px;top:610.62px;" width="20" height="21" viewBox="0 0 20 21"><circle cx="9" cy="9" r="8.800" fill="#3a8fa8"/><path d="M11.600 7.200A3.300 3.300 0 1 0 10.500 11.800" fill="none" stroke="#1c2327" stroke-width="1.300" opacity=".7"/><path d="M9.1 9.5h10.6v11.4h-10.6z" fill="#1c2327"/><path d="M10.2 10.6h8.700l-3.900 4.550 3.900 4.550h-8.700z" fill="#c79df6"/></svg>
<div class="t" style="left:307.40000000000003px;top:609.12px;height:25px;line-height:25px;font-size:16.5px;color:#d3d8dc;">MainActivity</div>
<svg class="i" style="left:287.20px;top:641.30px;" width="17" height="20" viewBox="0 0 17 20"><path d="M0 4.900L4.600 0V4.900z" fill="#aab6bd"/><path d="M5.800 0H12.600V9H6.400V17.600H0V6.100H5.800z" fill="#8d99a1"/><path d="M6.100 6.100V17.600" stroke="#7b8790" stroke-width=".8"/><path d="M6.300000000000001 8.9h10.6v11.4h-10.6z" fill="#1c2327"/><path d="M7.4 10h8.700l-3.900 4.550 3.900 4.550h-8.700z" fill="#c79df6"/></svg>
<div class="t" style="left:307.40000000000003px;top:639.60px;height:25px;line-height:25px;font-size:16.5px;color:#d3d8dc;">Navigation.kt</div>
<svg class="i" style="left:284.20px;top:671.58px;" width="20" height="21" viewBox="0 0 20 21"><circle cx="9" cy="9" r="8.800" fill="#b5872f"/><path d="M11.600 7.200A3.300 3.300 0 1 0 10.500 11.800" fill="none" stroke="#1c2327" stroke-width="1.300" opacity=".7"/><path d="M9.1 9.5h10.6v11.4h-10.6z" fill="#1c2327"/><path d="M10.2 10.6h8.700l-3.900 4.550 3.900 4.550h-8.700z" fill="#c79df6"/></svg>
<div class="t" style="left:307.40000000000003px;top:670.08px;height:25px;line-height:25px;font-size:16.5px;color:#d3d8dc;">TokenRepository</div>
<svg class="i" style="left:207.70px;top:700.96px;" width="19" height="19" viewBox="0 0 16 16"><path d="M5.400 3.700l5.200 4.300-5.200 4.300" fill="none" stroke="#a9aeb1" stroke-width="1.400"/></svg>
<svg class="i" style="left:231.70px;top:699.96px;" width="21" height="21" viewBox="0 0 16 16"><path d="M1.2 2.6h5.2l1.3 1.9H14.8v8.9H1.2z" fill="#8b979e"/><path d="M9 8.6h7.4V16H9z" fill="#1c2327"/><path d="M10.2 9.9h5.6M10.2 11.8h5.6M10.2 13.7h5.6M10.2 15.5h5.6" stroke="#e0a33e" stroke-width="1.05"/></svg>
<div class="t" style="left:256.70000000000005px;top:700.56px;height:25px;line-height:25px;font-size:16.5px;color:#d3d8dc;">res</div>
<svg class="i" style="left:232.00px;top:732.04px;" width="21" height="21" viewBox="0 0 16 16"><path d="M7 1h5v7.4H2.8V5.300H7z" fill="#8b979e"/><path d="M6.200 1.100v3.400H2.900z" fill="#b4bec5"/><rect x="0.6" y="9.4" width="14.8" height="6" fill="#2f9a5e"/><text x="8" y="14.700" font-family="Liberation Sans" font-weight="bold" font-size="6.200" text-anchor="middle" fill="#1d4d2a">MF</text></svg>
<div class="t" style="left:256.70000000000005px;top:731.04px;height:25px;line-height:25px;font-size:16.5px;color:#d3d8dc;">AndroidManifest.xml</div>
<svg class="i" style="left:182.35px;top:761.92px;" width="19" height="19" viewBox="0 0 16 16"><path d="M5.400 3.700l5.200 4.300-5.200 4.300" fill="none" stroke="#a9aeb1" stroke-width="1.400"/></svg>
<svg class="i" style="left:206.35px;top:760.92px;" width="21" height="21" viewBox="0 0 16 16"><path d="M1.2 2.6h5.2l1.3 1.9H14.8v8.9H1.2z" fill="#8b979e"/><path d="M9.3 9h7V16h-7z" fill="#1c2327"/><path d="M10.4 10.1h5.4v5.4h-5.4z" fill="#3fc1e8"/></svg>
<div class="t" style="left:231.35000000000002px;top:761.52px;height:25px;line-height:25px;font-size:16.5px;color:#d3d8dc;">test <b>[unitTest]</b></div>
<svg class="i" style="left:181.60px;top:795.30px;" width="21" height="19" viewBox="0 0 21 19"><path d="M.500 14.600C0 8.500 2 4 7 3.600c3-.200 5.600 1 6.600 3l3.200-.400c.800 1.800-.200 3.400-2 3.600l-.800-.200V12h-3.500v2.600H8v-2.100c-1 .4-2 .4-3 0v2.100z" fill="#858f96"/><path d="M14 6.700c2.200.100 4.600-.900 4.800-3.200.200-1.900-1.700-2.800-3-1.600" fill="none" stroke="#858f96" stroke-width="1.700"/><path d="M10.1 7.800000000000001h10.6v11.4h-10.6z" fill="#1c2327"/><path d="M11.2 8.9h8.700l-3.900 4.550 3.900 4.550h-8.700z" fill="#c79df6"/></svg>
<div class="t" style="left:206.0px;top:792.00px;height:25px;line-height:25px;font-size:16.5px;color:#d3d8dc;">build.gradle.kts</div>
<svg class="i" style="left:181.00px;top:821.88px;" width="21" height="21" viewBox="0 0 16 16"><path d="M6.9 1.2H12.8v13.6H3V5.3H6.9z" fill="#8b979e"/><path d="M6.1 1.3v3.3H3z" fill="#b4bec5"/><path d="M4.8 7.6h6.2M4.8 9.8h6.2M4.8 12h4.2" stroke="#1c2327" stroke-width=".95" opacity=".7"/></svg>
<div class="t" style="left:206.0px;top:822.48px;height:25px;line-height:25px;font-size:16.5px;color:#d3d8dc;">proguard-rules.pro</div>
<svg class="i" style="left:131.65px;top:853.36px;" width="19" height="19" viewBox="0 0 16 16"><path d="M5.400 3.700l5.200 4.300-5.200 4.300" fill="none" stroke="#a9aeb1" stroke-width="1.400"/></svg>
<svg class="i" style="left:155.65px;top:852.36px;" width="21" height="21" viewBox="0 0 16 16"><path d="M1.2 2.6h5.2l1.3 1.9H14.8v8.9H1.2z" fill="#8b979e"/></svg>
<div class="t" style="left:180.65px;top:852.96px;height:25px;line-height:25px;font-size:16.5px;color:#d3d8dc;">gradle</div>
<svg class="i" style="left:155.65px;top:882.84px;" width="21" height="21" viewBox="0 0 16 16"><path d="M6.9 1.2H12.4v7H9v6.6H3V5.3H6.9z" fill="#8b979e"/><path d="M6.1 1.3v3.3H3z" fill="#b4bec5"/><circle cx="12" cy="12.3" r="2.9" fill="none" stroke="#8b979e" stroke-width="1.1"/><path d="M10 14.3l4-4" stroke="#8b979e" stroke-width="1.1"/></svg>
<div class="t" style="left:180.65px;top:883.44px;height:25px;line-height:25px;font-size:16.5px;color:#d3d8dc;">.gitignore</div>
<svg class="i" style="left:156.25px;top:917.22px;" width="21" height="19" viewBox="0 0 21 19"><path d="M.500 14.600C0 8.500 2 4 7 3.600c3-.200 5.600 1 6.600 3l3.200-.400c.800 1.800-.200 3.400-2 3.600l-.800-.200V12h-3.500v2.600H8v-2.100c-1 .4-2 .4-3 0v2.100z" fill="#858f96"/><path d="M14 6.700c2.200.100 4.600-.900 4.800-3.200.200-1.900-1.700-2.800-3-1.600" fill="none" stroke="#858f96" stroke-width="1.700"/><path d="M10.1 7.800000000000001h10.6v11.4h-10.6z" fill="#1c2327"/><path d="M11.2 8.9h8.700l-3.900 4.550 3.900 4.550h-8.700z" fill="#c79df6"/></svg>
<div class="t" style="left:180.65px;top:913.92px;height:25px;line-height:25px;font-size:16.5px;color:#d3d8dc;">build.gradle.kts</div>
<svg class="i" style="left:155.65px;top:943.80px;" width="21" height="21" viewBox="0 0 16 16"><path d="M6.9 1.2H12.4v6H8v7.6H3V5.3H6.9z" fill="#8b979e"/><path d="M6.1 1.3v3.3H3z" fill="#b4bec5"/><rect x="8.2" y="11.6" width="1.9" height="4" fill="#e8743b"/><rect x="10.9" y="9.8" width="1.9" height="5.8" fill="#f0b32e"/><rect x="13.6" y="8" width="1.9" height="7.6" fill="#5fbf4a"/></svg>
<div class="t" style="left:180.65px;top:944.40px;height:25px;line-height:25px;font-size:16.5px;color:#d3d8dc;">gradle.properties</div>
<svg class="i" style="left:155.65px;top:974.28px;" width="21" height="21" viewBox="0 0 16 16"><rect x="1.6" y="2.8" width="13.2" height="10.4" fill="#8b979e"/><path d="M5.2 5.4l3 2.6-3 2.6" fill="none" stroke="#1c2327" stroke-width="1.5"/></svg>
<div class="t" style="left:180.65px;top:974.88px;height:25px;line-height:25px;font-size:16.5px;color:#d3d8dc;">gradlew</div>
<svg class="i" style="left:155.65px;top:1004.76px;" width="21" height="21" viewBox="0 0 16 16"><path d="M6.9 1.2H12.8v13.6H3V5.3H6.9z" fill="#8b979e"/><path d="M6.1 1.3v3.3H3z" fill="#b4bec5"/><path d="M4.8 7.6h6.2M4.8 9.8h6.2M4.8 12h4.2" stroke="#1c2327" stroke-width=".95" opacity=".7"/></svg>
<div class="t" style="left:180.65px;top:1005.36px;height:25px;line-height:25px;font-size:16.5px;color:#d3d8dc;">gradlew.bat</div>
<svg class="i" style="left:155.65px;top:1035.24px;" width="21" height="21" viewBox="0 0 16 16"><path d="M6.9 1.2H12.4v6H8v7.6H3V5.3H6.9z" fill="#8b979e"/><path d="M6.1 1.3v3.3H3z" fill="#b4bec5"/><rect x="8.2" y="11.6" width="1.9" height="4" fill="#e8743b"/><rect x="10.9" y="9.8" width="1.9" height="5.8" fill="#f0b32e"/><rect x="13.6" y="8" width="1.9" height="7.6" fill="#5fbf4a"/></svg>
<div class="t" style="left:180.65px;top:1035.84px;height:25px;line-height:25px;font-size:16.5px;color:#c5826a;">local.properties</div>
<svg class="i" style="left:155.95px;top:1067.32px;" width="21" height="21" viewBox="0 0 16 16"><path d="M7 1h5v7.4H2.8V5.300H7z" fill="#8b979e"/><path d="M6.200 1.100v3.400H2.900z" fill="#b4bec5"/><rect x="0.6" y="9.4" width="14.8" height="6" fill="#3a8fb3"/><text x="8" y="14.700" font-family="Liberation Sans" font-weight="bold" font-size="6.200" text-anchor="middle" fill="#17455a">MD</text></svg>
<div class="t" style="left:180.65px;top:1066.32px;height:25px;line-height:25px;font-size:16.5px;color:#d3d8dc;">README.md</div>
<svg class="i" style="left:156.25px;top:1100.10px;" width="21" height="19" viewBox="0 0 21 19"><path d="M.500 14.600C0 8.500 2 4 7 3.600c3-.200 5.600 1 6.600 3l3.200-.400c.800 1.800-.200 3.400-2 3.600l-.800-.200V12h-3.500v2.600H8v-2.100c-1 .4-2 .4-3 0v2.100z" fill="#858f96"/><path d="M14 6.700c2.200.100 4.600-.900 4.800-3.200.200-1.900-1.700-2.800-3-1.600" fill="none" stroke="#858f96" stroke-width="1.700"/><path d="M10.1 7.800000000000001h10.6v11.4h-10.6z" fill="#1c2327"/><path d="M11.2 8.9h8.700l-3.900 4.550 3.900 4.550h-8.700z" fill="#c79df6"/></svg>
<div class="t" style="left:180.65px;top:1096.80px;height:25px;line-height:25px;font-size:16.5px;color:#d3d8dc;">settings.gradle.kts</div>
<svg class="i" style="left:106.30px;top:1127.68px;" width="19" height="19" viewBox="0 0 16 16"><path d="M5.400 3.700l5.200 4.300-5.200 4.300" fill="none" stroke="#a9aeb1" stroke-width="1.400"/></svg>
<svg class="i" style="left:130.30px;top:1126.68px;" width="21" height="21" viewBox="0 0 16 16"><rect x="1.2" y="3.6" width="1.7" height="10" fill="#b4bec5"/><rect x="4" y="1.8" width="1.7" height="11.8" fill="#6cc24a"/><rect x="6.8" y="3" width="1.7" height="10.6" fill="#b4bec5"/><rect x="9.6" y="4.4" width="1.7" height="9.2" fill="#8b979e"/><rect x="12.4" y="3.2" width="1.7" height="10.4" fill="#4a9fd8"/></svg>
<div class="t" style="left:155.3px;top:1127.28px;height:25px;line-height:25px;font-size:16.5px;color:#d3d8dc;">External Libraries</div>
<svg class="i" style="left:106.30px;top:1158.16px;" width="19" height="19" viewBox="0 0 16 16"><path d="M5.400 3.700l5.200 4.300-5.200 4.300" fill="none" stroke="#a9aeb1" stroke-width="1.400"/></svg>
<svg class="i" style="left:130.30px;top:1157.16px;" width="21" height="21" viewBox="0 0 16 16"><path d="M1.6 2h9.600l2.6 2.600V14H1.600z" fill="#8b979e"/><path d="M3.6 4.400l2.4 2-2.4 2" fill="none" stroke="#1c2327" stroke-width="1.2"/><circle cx="11.5" cy="12.6" r="3.6" fill="#2f9fe0"/></svg>
<div class="t" style="left:155.3px;top:1157.76px;height:25px;line-height:25px;font-size:16.5px;color:#d3d8dc;">Scratches and Consoles</div>
</div></div>
<div class="t" style="left:531px;top:147.20px;height:21px;line-height:21px;font-size:14px;color:#6b5248;">i</div>
<div class="t" style="left:536.5px;top:147.20px;height:21px;line-height:21px;font-size:14px;color:#c5826a;">lsQuery.kt</div>
<svg class="i" style="left:631px;top:150.6px" width="10" height="10" viewBox="0 0 10 10"><path d="M1 1l8 8M9 1l-8 8" stroke="#6f7a80" stroke-width="1.100"/></svg>
<div class="r" style="left:529.5px;top:172.9px;width:823px;height:1.3px;background:#393a3a;"></div>
<div class="r" style="left:650.2px;top:140px;width:200.8px;height:34px;background:#36434b;"></div>
<div class="r" style="left:650.2px;top:170.3px;width:200.8px;height:3.7px;background:#029a8b;"></div>
<svg class="i" style="left:663.90px;top:147.20px;" width="17" height="20" viewBox="0 0 17 20"><path d="M0 4.900L4.600 0V4.900z" fill="#aab6bd"/><path d="M5.800 0H12.600V9H6.400V17.600H0V6.100H5.800z" fill="#8d99a1"/><path d="M6.100 6.100V17.600" stroke="#7b8790" stroke-width=".8"/><path d="M6.300000000000001 8.9h10.6v11.4h-10.6z" fill="#36434b"/><path d="M7.4 10h8.700l-3.900 4.550 3.900 4.550h-8.700z" fill="#c79df6"/></svg>
<div class="t" style="left:687px;top:147.20px;height:21px;line-height:21px;font-size:14px;color:#7fcfc4;">LaunchDetails.kt</div>
<svg class="i" style="left:830px;top:150.6px" width="10" height="10" viewBox="0 0 10 10"><path d="M1 1l8 8M9 1l-8 8" stroke="#66767e" stroke-width="1.100"/></svg>
<div class="r" style="left:851px;top:140px;width:216.8px;height:33px;background:#323a38;"></div>
<svg class="i" style="left:863.00px;top:147.20px;" width="17" height="20" viewBox="0 0 17 20"><path d="M0 4.900L4.600 0V4.900z" fill="#aab6bd"/><path d="M5.800 0H12.600V9H6.400V17.600H0V6.100H5.800z" fill="#8d99a1"/><path d="M6.100 6.100V17.600" stroke="#7b8790" stroke-width=".8"/><path d="M6.300000000000001 8.9h10.6v11.4h-10.6z" fill="#323a38"/><path d="M7.4 10h8.700l-3.900 4.550 3.900 4.550h-8.700z" fill="#c79df6"/></svg>
<div class="t" style="left:886.5px;top:147.20px;height:21px;line-height:21px;font-size:14px;color:#d3d8dc;">ExampleUnitTest.kt</div>
<svg class="i" style="left:1047.5px;top:150.6px" width="10" height="10" viewBox="0 0 10 10"><path d="M1 1l8 8M9 1l-8 8" stroke="#6f7a80" stroke-width="1.100"/></svg>
<svg class="i" style="left:1079.00px;top:146.50px;" width="20" height="20" viewBox="0 0 16 16"><path d="M7.500 1.200H13v9H9v4.600H3.500V5.200z" fill="#8b979e"/><path d="M7.500 1.200v4H3.500z" fill="#b4bec5"/><path d="M7 6v9M2 8v7" stroke="#1c2327" stroke-width="1"/><path d="M1 6.500h1.600v8.500H1z" fill="#8b979e"/><text x="11.800" y="15.600" font-family="Liberation Mono" font-size="7" text-anchor="middle" fill="#b4bec5">[T]</text></svg>
<div class="t" style="left:1104.5px;top:147.20px;height:21px;line-height:21px;font-size:14px;color:#d3d8dc;">libs.versions.toml</div>
<svg class="i" style="left:1265px;top:150.6px" width="10" height="10" viewBox="0 0 10 10"><path d="M1 1l8 8M9 1l-8 8" stroke="#6f7a80" stroke-width="1.100"/></svg>
<svg class="i" style="left:1294.00px;top:148.50px;" width="18" height="18" viewBox="0 0 16 16"><path d="M3.500 5.500l4.500 4.500 4.500-4.500" fill="none" stroke="#d3d8dc" stroke-width="1.700"/></svg>
<div class="r" style="left:1335.3px;top:147.8px;width:3.400px;height:3.400px;border-radius:50%;background:#d3d8dc"></div>
<div class="r" style="left:1335.3px;top:154.8px;width:3.400px;height:3.400px;border-radius:50%;background:#d3d8dc"></div>
<div class="r" style="left:1335.3px;top:161.8px;width:3.400px;height:3.400px;border-radius:50%;background:#d3d8dc"></div>
<div class="r" style="left:1087px;top:179.500px;width:70.500px;height:25px;border-radius:4px;background:#37474f"></div>
<svg class="i" style="left:1090.50px;top:181.50px;" width="19" height="19" viewBox="0 0 16 16"><path d="M1.500 3h13M1.500 6.400h13M1.500 9.800h13M1.500 13.200h13" stroke="#c3c9cd" stroke-width="1.500"/></svg>
<div class="t" style="left:1114px;top:181.30px;height:25px;line-height:25px;font-size:16.5px;color:#d3d8dc;">Code</div>
<svg class="i" style="left:1169.50px;top:181.50px;" width="19" height="19" viewBox="0 0 16 16"><path d="M1.500 3h5.500M1.500 6.400h5.500M1.500 9.800h5.500M1.500 13.200h5.500" stroke="#c3c9cd" stroke-width="1.500"/><rect x="8.500" y="2.200" width="6" height="11.800" fill="#c3c9cd"/></svg>
<div class="t" style="left:1192.5px;top:181.30px;height:25px;line-height:25px;font-size:16.5px;color:#d3d8dc;">Split</div>
<svg class="i" style="left:1258.50px;top:181.50px;" width="19" height="19" viewBox="0 0 16 16"><rect x="1.500" y="2" width="13" height="12" rx=".8" fill="#c3c9cd"/><path d="M3 12l3.200-4 2.300 2.500 1.800-1.800L13 12z" fill="#1c2327"/></svg>
<div class="t" style="left:1281.5px;top:181.30px;height:25px;line-height:25px;font-size:16.5px;color:#d3d8dc;">Design</div>
<div class="r" style="left:529.5px;top:209.3px;width:823px;height:1.3px;background:#393a3a;"></div>
<div class="r" style="left:529.5px;top:210px;width:822.5px;height:958px;overflow:hidden"><div class="r" style="left:-529.5px;top:-210px;width:1920px;height:1247px">
<div class="r" style="left:529.5px;top:944.6px;width:822.5px;height:27.94px;background:#293135;"></div>
<div class="r" style="left:631px;top:239px;width:1px;height:930px;background:#363e42;"></div>
<div class="r" style="left:675.8px;top:246.1px;width:1.2px;height:27.940000000000026px;background:#393e41;"></div>
<div class="r" style="left:675.8px;top:301.98px;width:1.2px;height:866.1400000000001px;background:#393e41;"></div>
<div class="r" style="left:715.4px;top:246.1px;width:1.2px;height:27.940000000000026px;background:#393e41;"></div>
<div class="r" style="left:715.4px;top:329.92px;width:1.2px;height:838.2px;background:#393e41;"></div>
<div class="r" style="left:754.9999999999999px;top:385.8px;width:1.2px;height:139.7px;background:#393e41;"></div>
<div class="r" style="left:754.9999999999999px;top:665.2px;width:1.2px;height:502.9200000000001px;background:#393e41;"></div>
<div class="r" style="left:794.5999999999999px;top:721.08px;width:1.2px;height:55.879999999999995px;background:#393e41;"></div>
<div class="r" style="left:794.5999999999999px;top:888.72px;width:1.2px;height:83.82000000000005px;background:#393e41;"></div>
<div class="r" style="left:794.5999999999999px;top:1084.3px;width:1.2px;height:83.82000000000016px;background:#393e41;"></div>
<div class="t" style="left:638.8px;top:248.50px;height:27.94px;line-height:27.94px;font-size:16.500px;color:#d0d6da">            .<span style="color:#fbc669">padding</span>(<span style="color:#a4ce7a">16</span>.<span style="color:#f48f8c">dp</span>)</div>
<div class="t" style="left:520px;width:44.800px;text-align:right;top:248.50px;height:27.94px;line-height:27.94px;font-size:16.500px;color:#4b575e">71</div>
<div class="t" style="left:638.8px;top:276.44px;height:27.94px;line-height:27.94px;font-size:16.500px;color:#d0d6da">    ) {</div>
<div class="t" style="left:520px;width:44.800px;text-align:right;top:276.44px;height:27.94px;line-height:27.94px;font-size:16.500px;color:#4b575e">72</div>
<div class="t" style="left:638.8px;top:304.38px;height:27.94px;line-height:27.94px;font-size:16.500px;color:#d0d6da">        <span style="color:#7ec699">Row</span>(<span style="color:#fbc669">verticalAlignment</span> <span style="color:#fbc669">=</span> Alignment.<span style="color:#f48f8c">CenterVertically</span>) {</div>
<div class="t" style="left:520px;width:44.800px;text-align:right;top:304.38px;height:27.94px;line-height:27.94px;font-size:16.500px;color:#4b575e">73</div>
<div class="t" style="left:638.8px;top:332.32px;height:27.94px;line-height:27.94px;font-size:16.500px;color:#d0d6da">            <span style="color:#7f868b">// Mission patch</span></div>
<div class="t" style="left:520px;width:44.800px;text-align:right;top:332.32px;height:27.94px;line-height:27.94px;font-size:16.500px;color:#4b575e">74</div>
<div class="t" style="left:638.8px;top:360.26px;height:27.94px;line-height:27.94px;font-size:16.500px;color:#d0d6da">            <span style="color:#7ec699">AsyncImage</span>(</div>
<div class="t" style="left:520px;width:44.800px;text-align:right;top:360.26px;height:27.94px;line-height:27.94px;font-size:16.500px;color:#4b575e">75</div>
<div class="t" style="left:638.8px;top:388.20px;height:27.94px;line-height:27.94px;font-size:16.500px;color:#d0d6da">                <span style="color:#fbc669">modifier</span> <span style="color:#fbc669">=</span> Modifier.<span style="color:#fbc669">size</span>(<span style="color:#a4ce7a">160</span>.<span style="color:#f48f8c">dp</span>, <span style="color:#a4ce7a">160</span>.<span style="color:#f48f8c">dp</span>),</div>
<div class="t" style="left:520px;width:44.800px;text-align:right;top:388.20px;height:27.94px;line-height:27.94px;font-size:16.500px;color:#4b575e">76</div>
<div class="r" style="left:876.1px;top:413.74px;width:40.2px;height:27.94px;background:#4a3372;"></div>
<div class="t" style="left:638.8px;top:416.14px;height:27.94px;line-height:27.94px;font-size:16.500px;color:#d0d6da">                <span style="color:#fbc669">model</span> <span style="color:#fbc669">=</span> <span style="color:#62b0ee">data</span>.<span style="color:#f48f8c">launch</span>?.<span style="color:#f48f8c">mission</span>?.<span style="color:#f48f8c">missionPatch</span>,</div>
<div class="t" style="left:520px;width:44.800px;text-align:right;top:416.14px;height:27.94px;line-height:27.94px;font-size:16.500px;color:#4b575e">77</div>
<div class="t" style="left:638.8px;top:444.08px;height:27.94px;line-height:27.94px;font-size:16.500px;color:#d0d6da">                <span style="color:#fbc669">placeholder</span> <span style="color:#fbc669">=</span> <span style="color:#7ec699">painterResource</span>(R.drawable.<span style="color:#62b0ee">ic_placeholder</span>),</div>
<div class="t" style="left:520px;width:44.800px;text-align:right;top:444.08px;height:27.94px;line-height:27.94px;font-size:16.500px;color:#4b575e">78</div>
<div class="t" style="left:638.8px;top:472.02px;height:27.94px;line-height:27.94px;font-size:16.500px;color:#d0d6da">                <span style="color:#fbc669">error</span> <span style="color:#fbc669">=</span> <span style="color:#7ec699">painterResource</span>(R.drawable.<span style="color:#62b0ee">ic_placeholder</span>),</div>
<div class="t" style="left:520px;width:44.800px;text-align:right;top:472.02px;height:27.94px;line-height:27.94px;font-size:16.500px;color:#4b575e">79</div>
<div class="t" style="left:638.8px;top:499.96px;height:27.94px;line-height:27.94px;font-size:16.500px;color:#d0d6da">                <span style="color:#fbc669">contentDescription</span> <span style="color:#fbc669">=</span> <span style="color:#b4d27e">&quot;Mission patch&quot;</span></div>
<div class="t" style="left:520px;width:44.800px;text-align:right;top:499.96px;height:27.94px;line-height:27.94px;font-size:16.500px;color:#4b575e">80</div>
<div class="t" style="left:638.8px;top:527.90px;height:27.94px;line-height:27.94px;font-size:16.500px;color:#d0d6da">            )</div>
<div class="t" style="left:520px;width:44.800px;text-align:right;top:527.90px;height:27.94px;line-height:27.94px;font-size:16.500px;color:#4b575e">81</div>
<div class="t" style="left:638.8px;top:555.84px;height:27.94px;line-height:27.94px;font-size:16.500px;color:#d0d6da"></div>
<div class="t" style="left:520px;width:44.800px;text-align:right;top:555.84px;height:27.94px;line-height:27.94px;font-size:16.500px;color:#4b575e">82</div>
<div class="t" style="left:638.8px;top:583.78px;height:27.94px;line-height:27.94px;font-size:16.500px;color:#d0d6da">            <span style="color:#7ec699">Spacer</span>(<span style="color:#fbc669">modifier</span> <span style="color:#fbc669">=</span> Modifier.<span style="color:#fbc669">size</span>(<span style="color:#a4ce7a">16</span>.<span style="color:#f48f8c">dp</span>))</div>
<div class="t" style="left:520px;width:44.800px;text-align:right;top:583.78px;height:27.94px;line-height:27.94px;font-size:16.500px;color:#4b575e">83</div>
<div class="t" style="left:638.8px;top:611.72px;height:27.94px;line-height:27.94px;font-size:16.500px;color:#d0d6da"></div>
<div class="t" style="left:520px;width:44.800px;text-align:right;top:611.72px;height:27.94px;line-height:27.94px;font-size:16.500px;color:#4b575e">84</div>
<div class="t" style="left:638.8px;top:639.66px;height:27.94px;line-height:27.94px;font-size:16.500px;color:#d0d6da">            <span style="color:#7ec699">Column</span> {</div>
<div class="t" style="left:520px;width:44.800px;text-align:right;top:639.66px;height:27.94px;line-height:27.94px;font-size:16.500px;color:#4b575e">85</div>
<div class="t" style="left:638.8px;top:667.60px;height:27.94px;line-height:27.94px;font-size:16.500px;color:#d0d6da">                <span style="color:#7f868b">// Mission name</span></div>
<div class="t" style="left:520px;width:44.800px;text-align:right;top:667.60px;height:27.94px;line-height:27.94px;font-size:16.500px;color:#4b575e">86</div>
<div class="t" style="left:638.8px;top:695.54px;height:27.94px;line-height:27.94px;font-size:16.500px;color:#d0d6da">                <span style="color:#7ec699">Text</span>(</div>
<div class="t" style="left:520px;width:44.800px;text-align:right;top:695.54px;height:27.94px;line-height:27.94px;font-size:16.500px;color:#4b575e">87</div>
<div class="t" style="left:638.8px;top:723.48px;height:27.94px;line-height:27.94px;font-size:16.500px;color:#d0d6da">                    <span style="color:#fbc669">style</span> <span style="color:#fbc669">=</span> MaterialTheme.<span style="color:#7ec699">typography</span>.<span style="color:#f48f8c">headlineMedium</span>,</div>
<div class="t" style="left:520px;width:44.800px;text-align:right;top:723.48px;height:27.94px;line-height:27.94px;font-size:16.500px;color:#4b575e">88</div>
<div class="r" style="left:905.8px;top:749.02px;width:40.2px;height:27.94px;background:#4a3372;"></div>
<div class="t" style="left:638.8px;top:751.42px;height:27.94px;line-height:27.94px;font-size:16.500px;color:#d0d6da">                    <span style="color:#fbc669">text</span> <span style="color:#fbc669">=</span> <span style="color:#62b0ee">data</span>.<span style="color:#f48f8c">launch</span>?.<span style="color:#f48f8c">mission</span>?.<span style="color:#f48f8c">name</span> ?: <span style="color:#b4d27e">&quot;&quot;</span></div>
<div class="t" style="left:520px;width:44.800px;text-align:right;top:751.42px;height:27.94px;line-height:27.94px;font-size:16.500px;color:#4b575e">89</div>
<div class="t" style="left:638.8px;top:779.36px;height:27.94px;line-height:27.94px;font-size:16.500px;color:#d0d6da">                )</div>
<div class="t" style="left:520px;width:44.800px;text-align:right;top:779.36px;height:27.94px;line-height:27.94px;font-size:16.500px;color:#4b575e">90</div>
<div class="t" style="left:638.8px;top:807.30px;height:27.94px;line-height:27.94px;font-size:16.500px;color:#d0d6da"></div>
<div class="t" style="left:520px;width:44.800px;text-align:right;top:807.30px;height:27.94px;line-height:27.94px;font-size:16.500px;color:#4b575e">91</div>
<div class="t" style="left:638.8px;top:835.24px;height:27.94px;line-height:27.94px;font-size:16.500px;color:#d0d6da">                <span style="color:#7f868b">// Rocket name</span></div>
<div class="t" style="left:520px;width:44.800px;text-align:right;top:835.24px;height:27.94px;line-height:27.94px;font-size:16.500px;color:#4b575e">92</div>
<div class="t" style="left:638.8px;top:863.18px;height:27.94px;line-height:27.94px;font-size:16.500px;color:#d0d6da">                <span style="color:#7ec699">Text</span>(</div>
<div class="t" style="left:520px;width:44.800px;text-align:right;top:863.18px;height:27.94px;line-height:27.94px;font-size:16.500px;color:#4b575e">93</div>
<div class="t" style="left:638.8px;top:891.12px;height:27.94px;line-height:27.94px;font-size:16.500px;color:#d0d6da">                    <span style="color:#fbc669">modifier</span> <span style="color:#fbc669">=</span> Modifier.<span style="color:#fbc669">padding</span>(<span style="color:#fbc669">top</span> <span style="color:#fbc669">=</span> <span style="color:#a4ce7a">8</span>.<span style="color:#f48f8c">dp</span>),</div>
<div class="t" style="left:520px;width:44.800px;text-align:right;top:891.12px;height:27.94px;line-height:27.94px;font-size:16.500px;color:#4b575e">94</div>
<div class="t" style="left:638.8px;top:919.06px;height:27.94px;line-height:27.94px;font-size:16.500px;color:#d0d6da">                    <span style="color:#fbc669">style</span> <span style="color:#fbc669">=</span> MaterialTheme.<span style="color:#7ec699">typography</span>.<span style="color:#f48f8c">headlineSmall</span>,</div>
<div class="t" style="left:520px;width:44.800px;text-align:right;top:919.06px;height:27.94px;line-height:27.94px;font-size:16.500px;color:#4b575e">95</div>
<div class="r" style="left:905.8px;top:944.6px;width:40.2px;height:27.94px;background:#4a3372;"></div>
<div class="t" style="left:638.8px;top:947.00px;height:27.94px;line-height:27.94px;font-size:16.500px;color:#d0d6da">                    <span style="color:#fbc669">text</span> <span style="color:#fbc669">=</span> <span style="color:#62b0ee">data</span>.<span style="color:#f48f8c">launch</span>?.<span style="color:#f48f8c">rocket</span>?.<span style="color:#f48f8c">name</span>?.<span style="color:#fbc669">let</span> { <span style="color:#b4d27e">&quot;</span><span style="display:inline-block;width:19.800px;height:16px;vertical-align:-3px;position:relative"><svg style="position:absolute;left:-.500px;top:-1px" width="17.500" height="17.500" viewBox="0 0 16 16"><path d="M14.500 1.500c-4-.3-7 1.700-9 5.500l3.500 3.500c3.800-2 5.800-5 5.500-9z" fill="#dfe3ea"/><path d="M14.500 1.500c-1.500-.1-2.600.1-3.600.5l3.100 3.100c.4-1 .6-2.100.5-3.600z" fill="#e5484d"/><circle cx="10.300" cy="5.700" r="1.300" fill="#58a6e0"/><path d="M5.800 6.500L1.800 8l2.700 2.200zM9.500 10.200l-1.500 4-2.200-2.700z" fill="#e5342d"/><path d="M5 10c-2 .5-3.600 2.500-4 5 2.500-.4 4.500-2 5-4z" fill="#f5a623"/><path d="M6.200 11.200c-1.200.4-2 1.500-2.200 2.800 1.300-.2 2.400-1 2.800-2.200z" fill="#e5342d"/></svg></span> <span style="color:#4fc3f7">$</span><span style="color:#fbc669">it</span><span style="color:#b4d27e">&quot;</span> } ?: <span style="color:#b4d27e">&quot;&quot;</span></div>
<div class="t" style="left:520px;width:44.800px;text-align:right;top:947.00px;height:27.94px;line-height:27.94px;font-size:16.500px;color:#c5cacd">96</div>
<div class="t" style="left:638.8px;top:974.94px;height:27.94px;line-height:27.94px;font-size:16.500px;color:#d0d6da">                )</div>
<div class="t" style="left:520px;width:44.800px;text-align:right;top:974.94px;height:27.94px;line-height:27.94px;font-size:16.500px;color:#4b575e">97</div>
<div class="t" style="left:638.8px;top:1002.88px;height:27.94px;line-height:27.94px;font-size:16.500px;color:#d0d6da"></div>
<div class="t" style="left:520px;width:44.800px;text-align:right;top:1002.88px;height:27.94px;line-height:27.94px;font-size:16.500px;color:#4b575e">98</div>
<div class="t" style="left:638.8px;top:1030.82px;height:27.94px;line-height:27.94px;font-size:16.500px;color:#d0d6da">                <span style="color:#7f868b">// Site</span></div>
<div class="t" style="left:520px;width:44.800px;text-align:right;top:1030.82px;height:27.94px;line-height:27.94px;font-size:16.500px;color:#4b575e">99</div>
<div class="t" style="left:638.8px;top:1058.76px;height:27.94px;line-height:27.94px;font-size:16.500px;color:#d0d6da">                <span style="color:#7ec699">Text</span>(</div>
<div class="t" style="left:520px;width:44.800px;text-align:right;top:1058.76px;height:27.94px;line-height:27.94px;font-size:16.500px;color:#4b575e">100</div>
<div class="t" style="left:638.8px;top:1086.70px;height:27.94px;line-height:27.94px;font-size:16.500px;color:#d0d6da">                    <span style="color:#fbc669">modifier</span> <span style="color:#fbc669">=</span> Modifier.<span style="color:#fbc669">padding</span>(<span style="color:#fbc669">top</span> <span style="color:#fbc669">=</span> <span style="color:#a4ce7a">8</span>.<span style="color:#f48f8c">dp</span>),</div>
<div class="t" style="left:520px;width:44.800px;text-align:right;top:1086.70px;height:27.94px;line-height:27.94px;font-size:16.500px;color:#4b575e">101</div>
<div class="t" style="left:638.8px;top:1114.64px;height:27.94px;line-height:27.94px;font-size:16.500px;color:#d0d6da">                    <span style="color:#fbc669">style</span> <span style="color:#fbc669">=</span> MaterialTheme.<span style="color:#7ec699">typography</span>.<span style="color:#f48f8c">titleMedium</span>,</div>
<div class="t" style="left:520px;width:44.800px;text-align:right;top:1114.64px;height:27.94px;line-height:27.94px;font-size:16.500px;color:#4b575e">102</div>
<div class="r" style="left:905.8px;top:1140.18px;width:40.2px;height:27.94px;background:#4a3372;"></div>
<div class="t" style="left:638.8px;top:1142.58px;height:27.94px;line-height:27.94px;font-size:16.500px;color:#d0d6da">                    <span style="color:#fbc669">text</span> <span style="color:#fbc669">=</span> <span style="color:#62b0ee">data</span>.<span style="color:#f48f8c">launch</span>?.<span style="color:#f48f8c">site</span> ?: <span style="color:#b4d27e">&quot;&quot;</span>,</div>
<div class="t" style="left:520px;width:44.800px;text-align:right;top:1142.58px;height:27.94px;line-height:27.94px;font-size:16.500px;color:#4b575e">103</div>
<div class="r" style="left:619.5px;top:413.74px;width:11px;height:27.94px;background:#fbc463;"></div>
<div class="r" style="left:619.5px;top:749.02px;width:11px;height:27.94px;background:#fbc463;"></div>
<div class="r" style="left:619.5px;top:944.6px;width:11px;height:27.94px;background:#fbc463;"></div>
<div class="r" style="left:619.5px;top:1140.18px;width:11px;height:27.94px;background:#fbc463;"></div>
<svg class="i" style="left:625.4499999999999px;top:253.29999999999998px" width="11.700" height="13.700" viewBox="0 0 11.700 13.700"><path d="M.600 5.200L5.850 .600l5.250 4.600V13.100H.600z" fill="#1c2327" stroke="#4b555a" stroke-width="1"/><path d="M3.300 8.2h5.100" stroke="#4b555a" stroke-width="1"/></svg>
<svg class="i" style="left:625.4499999999999px;top:284.54px" width="11.700" height="13.700" viewBox="0 0 11.700 13.700"><path d="M.600 .600h10.500v8L5.850 13.100.600 8.600z" fill="#1c2327" stroke="#4b555a" stroke-width="1"/><path d="M3.300 5.4h5.100" stroke="#4b555a" stroke-width="1"/></svg>
<svg class="i" style="left:625.4499999999999px;top:312.48px" width="11.700" height="13.700" viewBox="0 0 11.700 13.700"><path d="M.600 .600h10.500v8L5.850 13.100.600 8.600z" fill="#1c2327" stroke="#4b555a" stroke-width="1"/><path d="M3.300 5.4h5.100" stroke="#4b555a" stroke-width="1"/></svg>
<svg class="i" style="left:625.4499999999999px;top:647.76px" width="11.700" height="13.700" viewBox="0 0 11.700 13.700"><path d="M.600 .600h10.500v8L5.850 13.100.600 8.600z" fill="#1c2327" stroke="#4b555a" stroke-width="1"/><path d="M3.300 5.4h5.100" stroke="#4b555a" stroke-width="1"/></svg>
<svg class="i" style="left:580px;top:443.68px" width="24" height="24" viewBox="0 0 24 24"><path d="M21.300 6.300A11 11 0 1 0 21.800 17" fill="none" stroke="#3f2bb0" stroke-width="1.300"/><path d="M8.600 16L12 7.600 15.400 16M9.800 13.300h4.400" fill="none" stroke="#4a33c8" stroke-width="1.700"/></svg>
<svg class="i" style="left:580px;top:471.62px" width="24" height="24" viewBox="0 0 24 24"><path d="M21.300 6.300A11 11 0 1 0 21.800 17" fill="none" stroke="#3f2bb0" stroke-width="1.300"/><path d="M8.600 16L12 7.600 15.400 16M9.800 13.300h4.400" fill="none" stroke="#4a33c8" stroke-width="1.700"/></svg>
<div class="r" style="left:1329px;top:424px;width:2.5px;height:19px;background:#a4ce7a;"></div>
<div class="r" style="left:1329px;top:588px;width:2.5px;height:24px;background:#a4ce7a;"></div>
<div class="r" style="left:1329px;top:538px;width:2.5px;height:7px;background:#56b6f0;"></div>
<div class="r" style="left:1329px;top:556px;width:2.5px;height:7px;background:#56b6f0;"></div>
<div class="r" style="left:1329px;top:640px;width:2.5px;height:7px;background:#56b6f0;"></div>
<div class="r" style="left:1329px;top:700px;width:2.5px;height:7px;background:#56b6f0;"></div>
<div class="r" style="left:1329px;top:773px;width:2.5px;height:7px;background:#56b6f0;"></div>
<div class="r" style="left:1329px;top:816px;width:2.5px;height:7px;background:#56b6f0;"></div>
<div class="r" style="left:1329px;top:857px;width:2.5px;height:7px;background:#56b6f0;"></div>
<div class="r" style="left:1334px;top:642.6px;width:18px;height:2px;background:#553b80;"></div>
<div class="r" style="left:1334px;top:702.6px;width:18px;height:2px;background:#553b80;"></div>
<div class="r" style="left:1334px;top:775.6px;width:18px;height:2px;background:#553b80;"></div>
<div class="r" style="left:1334px;top:818.6px;width:18px;height:2px;background:#553b80;"></div>
<div class="r" style="left:1334px;top:860.6px;width:18px;height:2px;background:#553b80;"></div>
<div class="r" style="left:1339.500px;top:661px;width:8.500px;height:202px;border-radius:4.500px;background:rgba(128,132,134,.36)"></div>
</div></div>
<div class="r" style="left:529.5px;top:210px;width:822.5px;height:29px;background:#1c2327;"></div>
<div class="r" style="left:631px;top:210px;width:1px;height:29px;background:#363e42;"></div>
<div class="r" style="left:895.9000000000001px;top:211px;width:40.2px;height:27.7px;background:#4a3372;"></div>
<div class="t" style="left:638.8px;top:211.900px;height:27.94px;line-height:27.94px;font-size:16.500px;color:#d0d6da"><span style="color:#c994ea">private</span> <span style="color:#c994ea">fun</span> <span style="color:#fbc669">LaunchDetails</span>(<span style="color:#62b0ee">data</span>: LaunchDetailsQuery.Data) {</div>
<div class="t" style="left:520px;width:44.800px;text-align:right;top:211.900px;height:27.94px;line-height:27.94px;font-size:16.500px;color:#4b575e">67</div>
<div class="r" style="left:529.5px;top:238.7px;width:684.5px;height:1.2px;background:#50595e;"></div>
<svg class="i" style="left:1224.00px;top:218.50px;" width="17" height="17" viewBox="0 0 16 16"><path d="M8 1.200L15.300 14.600H.7z" fill="#f0971f"/><path d="M8 5.600v4.800" stroke="#1c2327" stroke-width="1.700"/><circle cx="8" cy="12.400" r="1" fill="#1c2327"/></svg>
<div class="t" style="left:1243.5px;top:219.80px;height:21px;line-height:21px;font-size:14px;color:#c3c9cd;">4</div>
<svg class="i" style="left:1262.00px;top:218.50px;" width="17" height="17" viewBox="0 0 16 16"><path d="M8 1.200L15.300 14.600H.7z" fill="#e0b25f"/><path d="M8 5.600v4.800" stroke="#1c2327" stroke-width="1.700"/><circle cx="8" cy="12.400" r="1" fill="#1c2327"/></svg>
<div class="t" style="left:1282.5px;top:219.80px;height:21px;line-height:21px;font-size:14px;color:#c3c9cd;">1</div>
<svg class="i" style="left:1302.50px;top:220.00px;" width="15" height="15" viewBox="0 0 16 16"><path d="M3 10.500l5-5 5 5" fill="none" stroke="#c3c9cd" stroke-width="1.600"/></svg>
<svg class="i" style="left:1329.50px;top:220.00px;" width="15" height="15" viewBox="0 0 16 16"><path d="M3 5.500l5 5 5-5" fill="none" stroke="#c3c9cd" stroke-width="1.600"/></svg>
<div class="r" style="left:1352.2px;top:140px;width:1.6px;height:1028px;background:#393a3a;"></div>
<div class="t" style="left:1361px;top:146.00px;height:25px;line-height:25px;font-size:16.5px;color:#d3d8dc;">Running Devices:</div>
<div class="r" style="left:1353.5px;top:172.9px;width:469px;height:1.3px;background:#393a3a;"></div>
<div class="r" style="left:1529px;top:140px;width:185.4px;height:34px;background:#36434b;"></div>
<div class="r" style="left:1529px;top:170.3px;width:185.4px;height:3.7px;background:#029a8b;"></div>
<svg class="i" style="left:1545.00px;top:147.00px;" width="20" height="20" viewBox="0 0 16 16"><rect x="2.500" y="1.200" width="7.600" height="12.600" rx="1.200" fill="none" stroke="#b4bec5" stroke-width="1.300"/><path d="M4.800 12.200h3" stroke="#b4bec5" stroke-width="1"/><rect x="8.200" y="8.600" width="6" height="4.600" fill="#36434b" stroke="#b06fe0" stroke-width="1"/><path d="M9.400 15h3.600" stroke="#b06fe0" stroke-width="1"/><circle cx="13.600" cy="13.600" r="2" fill="#20e030"/></svg>
<div class="t" style="left:1570px;top:146.00px;height:25px;line-height:25px;font-size:16.5px;color:#d3d8dc;">Pixel 8 API 35</div>
<svg class="i" style="left:1720.50px;top:147.00px;" width="20" height="20" viewBox="0 0 16 16"><rect x="2" y="2.200" width="12" height="11.600" fill="none" stroke="#c3c9cd" stroke-width="1.400"/><rect x="2" y="2.200" width="12" height="3.400" fill="#c3c9cd"/></svg>
<div class="r" style="left:1752px;top:146px;width:1px;height:23px;background:#45484a;"></div>
<svg class="i" style="left:1764.00px;top:148.90px;" width="17" height="17" viewBox="0 0 16 16"><path fill-rule="evenodd" d="M6.700 1h2.600l.4 2 1.300.600 1.700-1.100 1.800 1.800-1.100 1.700.6 1.300 2 .4v2.600l-2 .4-.6 1.300 1.100 1.700-1.800 1.800-1.700-1.100-1.300.6-.4 2H6.700l-.4-2L5 14.400l-1.700 1.100-1.800-1.800 1.100-1.700L2 10.700l-2-.4V7.700l2-.4.6-1.300-1.100-1.700 1.800-1.800L5 3.600 6.300 3zM8 6a2.500 2.500 0 1 0 0 5 2.500 2.500 0 0 0 0-5z" fill="#c3c9cd" transform="translate(0 -.5)"/></svg>
<div class="r" style="left:1797.5px;top:156.5px;width:15px;height:2px;background:#c3c9cd;"></div>
<svg class="i" style="left:1363.00px;top:182.50px;" width="19" height="19" viewBox="0 0 16 16"><path d="M5 3.800A5.800 5.800 0 1 0 11 3.800" fill="none" stroke="#c3c9cd" stroke-width="1.700"/><path d="M8 1.200v6.300" stroke="#c3c9cd" stroke-width="1.700"/></svg>
<svg class="i" style="left:1396.50px;top:182.50px;" width="19" height="19" viewBox="0 0 16 16"><path d="M1.500 5.800h3L8.500 2v12L4.500 10.200h-3z" fill="#c3c9cd"/><path d="M10.300 5.200a3.800 3.800 0 0 1 0 5.600z" fill="#c3c9cd"/><path d="M11.500 2.500a6.500 6.500 0 0 1 0 11" fill="none" stroke="#c3c9cd" stroke-width="1.400"/></svg>
<svg class="i" style="left:1429.50px;top:182.50px;" width="19" height="19" viewBox="0 0 16 16"><path d="M2.500 5.800h3L9.500 2v12L5.500 10.200h-3z" fill="#c3c9cd"/><path d="M11.300 5.200a3.800 3.800 0 0 1 0 5.600z" fill="#c3c9cd"/></svg>
<div class="r" style="left:1459.5px;top:180px;width:1px;height:24px;background:#45484a;"></div>
<svg class="i" style="left:1469.50px;top:181.50px;" width="21" height="21" viewBox="0 0 16 16"><rect x="1.500" y="3.200" width="6" height="10" rx=".6" fill="none" stroke="#c3c9cd" stroke-width="1.400"/><path d="M11 2.500c3 2 3.500 6.500.8 9.800" fill="none" stroke="#3b9ad6" stroke-width="2.100"/><path d="M9.300 3.200l3.600-2 .2 4z" fill="#3b9ad6"/></svg>
<svg class="i" style="left:1503.50px;top:181.50px;" width="21" height="21" viewBox="0 0 16 16"><rect x="8.500" y="3.200" width="6" height="10" rx=".6" fill="none" stroke="#c3c9cd" stroke-width="1.400"/><path d="M5 2.500c-3 2-3.500 6.500-.8 9.800" fill="none" stroke="#3b9ad6" stroke-width="2.100"/><path d="M6.700 3.200l-3.600-2-.2 4z" fill="#3b9ad6"/></svg>
<div class="r" style="left:1534.5px;top:180px;width:1px;height:24px;background:#45484a;"></div>
<svg class="i" style="left:1546.50px;top:183.50px;" width="17" height="17" viewBox="0 0 16 16"><path d="M12.500 2.500v11L3 8z" fill="#c3c9cd"/></svg>
<div class="r" style="left:1583.0px;top:186.5px;width:11px;height:11px;border-radius:50%;background:#c3c9cd"></div>
<div class="r" style="left:1616px;top:186.5px;width:11px;height:11px;background:#c3c9cd;border-radius:1px"></div>
<div class="r" style="left:1643px;top:180px;width:1px;height:24px;background:#45484a;"></div>
<svg class="i" style="left:1654.00px;top:181.50px;" width="21" height="21" viewBox="0 0 16 16"><rect x="3" y="1.500" width="7.600" height="12.600" rx="1.200" fill="none" stroke="#c3c9cd" stroke-width="1.400"/><path d="M5.300 12.200h3" stroke="#c3c9cd" stroke-width="1"/><rect x="8.500" y="8.500" width="8" height="8" fill="#1c2327"/><g transform="translate(8.800 8.800) scale(.42)"><path fill-rule="evenodd" d="M6.700 1h2.600l.4 2 1.300.600 1.700-1.100 1.800 1.800-1.100 1.700.6 1.300 2 .4v2.600l-2 .4-.6 1.300 1.100 1.700-1.800 1.800-1.700-1.100-1.300.6-.4 2H6.700l-.4-2L5 14.400l-1.700 1.100-1.800-1.800 1.100-1.700L2 10.700l-2-.4V7.700l2-.4.6-1.300-1.100-1.700 1.800-1.800L5 3.600 6.300 3zM8 6a2.500 2.500 0 1 0 0 5 2.500 2.500 0 0 0 0-5z" fill="#c3c9cd" transform="translate(0 -.5)"/></g></svg>
<div class="r" style="left:1684.5px;top:180px;width:1px;height:24px;background:#45484a;"></div>
<svg class="i" style="left:1694.50px;top:181.50px;" width="21" height="21" viewBox="0 0 16 16"><path d="M1.500 4.500h3l1.200-1.800h4.600l1.200 1.800h3v9h-13z" fill="#c3c9cd"/><circle cx="8" cy="8.800" r="2.800" fill="#1c2327"/><circle cx="8" cy="8.800" r="1.500" fill="#c3c9cd"/></svg>
<div class="t" style="left:1723.8px;top:180.30px;height:20px;line-height:20px;font-size:13.5px;color:#8b979e;">»</div>
<svg class="i" style="left:1747.00px;top:180.50px;" width="20" height="20" viewBox="0 0 16 16"><rect x="3.500" y="1.500" width="10" height="7.500" fill="none" stroke="#c3c9cd" stroke-width="1.100"/><path d="M1.500 4v8h5" fill="none" stroke="#c3c9cd" stroke-width="1.100"/><circle cx="10.500" cy="10.500" r="2.600" fill="#1c2327" stroke="#c3c9cd" stroke-width="1.200"/><path d="M12.500 12.500l2.500 2.500" stroke="#c3c9cd" stroke-width="1.300"/></svg>
<div class="r" style="left:1779.5px;top:180px;width:1px;height:24px;background:#45484a;"></div>
<svg class="i" style="left:1792.00px;top:182.50px;" width="19" height="19" viewBox="0 0 16 16"><path d="M2.200 8.600l4 4L14 3.800" fill="none" stroke="#4fa955" stroke-width="2.300"/></svg>
<div class="r" style="left:1353.5px;top:209.3px;width:469px;height:1.3px;background:#393a3a;"></div>
<div class="r" style="left:1353.5px;top:210px;width:468.5px;height:958px;overflow:hidden"><div class="r" style="left:-1353.5px;top:-210px;width:1920px;height:1247px">
<div class="r" style="left:1362.300px;top:211.100px;width:448.200px;height:955.400px;border-radius:62px;background:linear-gradient(180deg,#56595b 0%,#494c4e 40%,#333537 85%,#2a2c2d 100%)"></div>
<div class="r" style="left:1364.300px;top:213.100px;width:444.200px;height:951.400px;border-radius:60px;background:linear-gradient(180deg,#424547 0%,#3b3e40 40%,#2b2d2e 85%,#242627 100%)"></div>
<div class="r" style="left:1369.800px;top:217.300px;width:433.200px;height:943px;border-radius:55.500px;background:linear-gradient(180deg,#5e6163 0%,#505355 40%,#37393b 85%,#2c2e2f 100%)"></div>
<div class="r" style="left:1371.600px;top:218.500px;width:429.800px;height:940.600px;border-radius:54px;background:#151617"></div>
<div class="r" style="left:1373px;top:219.500px;width:427.400px;height:938.800px;border-radius:53px;background:#000"></div>
<div class="r" style="left:1810.3px;top:466px;width:2.8px;height:60px;background:#5c5f61;border-radius:1px;box-shadow:0 0 0 .6px #1a1b1c"></div>
<div class="r" style="left:1810.3px;top:582px;width:2.8px;height:123px;background:#5c5f61;border-radius:1px;box-shadow:0 0 0 .6px #1a1b1c"></div>
<div class="r" style="left:1380px;top:232.500px;width:412px;height:889.500px;border-radius:42px 42px 10px 10px;background:#f9f8fd;overflow:hidden"><div class="r" style="left:0;top:0;width:412px;height:49px;background:#2c4275"></div><div class="s" style="left:28px;top:14px;height:20px;line-height:20px;font-size:14.300px;color:#fff">4:50</div><svg class="i" style="left:60px;top:17px" width="14" height="15" viewBox="0 0 14 15"><path d="M7 1l5 1.800v4.400c0 3.300-2.200 5.600-5 6.800-2.800-1.200-5-3.500-5-6.800V2.800z" fill="none" stroke="#fff" stroke-width="1.400"/><path d="M4 4l6 6.500" stroke="#fff" stroke-width="1.300"/></svg><div class="r" style="left:194px;top:12.500px;width:24px;height:24px;border-radius:50%;background:#05060a"></div><div class="r" style="left:201.500px;top:20px;width:9px;height:9px;border-radius:50%;background:radial-gradient(circle at 58% 42%,#3a4a55 0,#141c24 45%,#06080c 100%)"></div><svg class="i" style="left:353px;top:17.500px" width="14" height="14" viewBox="0 0 16 16"><path d="M8 .8c.7 0 1.100.8 1.100 1.700v3.200l6.100 3.800v1.600l-6.100-1.900v3.300l1.700 1.300v1.300L8 14.300l-2.800.8v-1.300l1.700-1.300V9.200L.8 11.100V9.500l6.100-3.800V2.500C6.900 1.600 7.300.8 8 .8z" fill="#fff"/></svg><svg class="i" style="left:374px;top:16px" width="10" height="16" viewBox="0 0 10 16"><path d="M3 .8h4v1.500h1.500c.5 0 .8.300.8.800v11.300c0 .5-.3.800-.8.800h-7c-.5 0-.8-.3-.8-.8V3.100c0-.5.300-.8.800-.8H3z" fill="#fff"/></svg><div class="s" style="left:17px;top:66px;height:32px;line-height:32px;font-size:21.800px;letter-spacing:-.350px;color:#1b1b20">Rocket Reserver</div><div class="s" style="left:0;width:412px;text-align:center;top:491px;height:22px;line-height:22px;font-size:15.700px;letter-spacing:.450px;color:#1b1b20">Oh no... An error happened.</div></div>
<div class="r" style="left:1532px;top:1131.800px;width:108px;height:4px;border-radius:2px;background:#f4f4f8"></div>
<div class="r" style="left:1766.500px;top:1006px;width:35.500px;height:136px;border-radius:5px;background:#1c2327;box-shadow:0 0 0 1px #2d3539,0 2px 6px rgba(0,0,0,.5)"></div>
<svg class="i" style="left:1776.50px;top:1017.00px;" width="15" height="15" viewBox="0 0 16 16"><path d="M8 1.500v13M1.500 8h13" stroke="#c3c9cd" stroke-width="1.800"/></svg>
<svg class="i" style="left:1776.50px;top:1050.50px;" width="15" height="15" viewBox="0 0 16 16"><path d="M1.500 8h13" stroke="#4c565c" stroke-width="1.800"/></svg>
<div class="s" style="left:1766.500px;width:35.500px;text-align:center;top:1081px;height:20px;line-height:20px;font-size:13.800px;letter-spacing:-1.300px;font-weight:bold;color:#c3c9cd">1:1</div>
<svg class="i" style="left:1774.50px;top:1114.50px;" width="19" height="19" viewBox="0 0 16 16"><rect x="1.200" y="2.500" width="13.600" height="11" fill="none" stroke="#4c565c" stroke-width="1.200"/><path d="M4 7.500V5.200h2.500M12 8.500v2.300H9.500" fill="none" stroke="#4c565c" stroke-width="1.100"/></svg>
</div></div>
<div class="r" style="left:72px;top:1168.2px;width:1777px;height:1.6px;background:#393a3a;"></div>
<svg class="i" style="left:107.50px;top:1173.50px;" width="17" height="17" viewBox="0 0 16 16"><circle cx="4.500" cy="2.800" r="1.700" fill="#c3c9cd"/><circle cx="4.500" cy="13.200" r="1.700" fill="#c3c9cd"/><circle cx="11.500" cy="5.200" r="1.700" fill="#c3c9cd"/><path d="M4.500 3v10M11.500 5.500c0 3.500-7 2.500-7 6" fill="none" stroke="#c3c9cd" stroke-width="1.500"/></svg>
<div class="t" style="left:130.3px;top:1172.90px;height:21px;line-height:21px;font-size:14px;color:#d3d8dc;">Git</div>
<svg class="i" style="left:179.00px;top:1173.50px;" width="17" height="17" viewBox="0 0 16 16"><path d="M1.800 13A6.400 6.400 0 0 1 14.200 13" fill="none" stroke="#c3c9cd" stroke-width="1.900"/><path d="M6.300 12.800L11.300 5l.8.500-3.500 8z" fill="#c3c9cd"/></svg>
<div class="t" style="left:200.8px;top:1172.90px;height:21px;line-height:21px;font-size:14px;color:#d3d8dc;">Profiler</div>
<svg class="i" style="left:302.50px;top:1173.00px;" width="18" height="18" viewBox="0 0 16 16"><path d="M14.200 4.500A7 7 0 1 0 14.600 11" fill="none" stroke="#c3c9cd" stroke-width="1.100"/><path d="M5.600 11L8 4.800 10.400 11M6.500 9h3" fill="none" stroke="#c3c9cd" stroke-width="1.400"/></svg>
<div class="t" style="left:324.3px;top:1172.90px;height:21px;line-height:21px;font-size:14px;color:#d3d8dc;">Apollo Normalized Cache</div>
<svg class="i" style="left:551.50px;top:1174.50px;" width="15" height="15" viewBox="0 0 16 16"><path d="M1.500 4.500h12.500M1.500 8.300h8M1.500 12.100h10.500" stroke="#c3c9cd" stroke-width="1.900"/></svg>
<div class="t" style="left:572.3px;top:1172.90px;height:21px;line-height:21px;font-size:14px;color:#d3d8dc;">Logcat</div>
<svg class="i" style="left:653.50px;top:1173.50px;" width="17" height="17" viewBox="0 0 16 16"><path d="M4 1.800h8l3 4.200L8 14.800 1 6z" fill="none" stroke="#c3c9cd" stroke-width="1.100"/><path d="M1 6h14M5.800 1.800L4.800 6 8 14.500 11.200 6l-1-4.200" fill="none" stroke="#c3c9cd" stroke-width="1"/></svg>
<div class="t" style="left:675.3px;top:1172.90px;height:21px;line-height:21px;font-size:14px;color:#d3d8dc;">App Quality Insights</div>
<svg class="i" style="left:873.00px;top:1173.50px;" width="17" height="17" viewBox="0 0 16 16"><g transform="rotate(-45 8 8)"><rect x="3" y="1.500" width="10" height="4.200" rx=".8" fill="#c3c9cd"/><rect x="6.900" y="5.400" width="2.400" height="10" fill="#c3c9cd"/></g></svg>
<div class="t" style="left:894.3px;top:1172.90px;height:21px;line-height:21px;font-size:14px;color:#d3d8dc;">Build</div>
<svg class="i" style="left:963.50px;top:1174.50px;" width="15" height="15" viewBox="0 0 16 16"><path d="M5 3.500h9.500M5 8h9.500M5 12.500h9.500" stroke="#c3c9cd" stroke-width="1.700"/><path d="M1.200 3.500h2.200M1.200 8h2.200M1.200 12.500h2.200" stroke="#c3c9cd" stroke-width="1.700"/></svg>
<div class="t" style="left:983.3px;top:1172.90px;height:21px;line-height:21px;font-size:14px;color:#d3d8dc;">TODO</div>
<svg class="i" style="left:1042.00px;top:1173.50px;" width="17" height="17" viewBox="0 0 16 16"><path d="M8 1.800l5.400 3.100v6.200L8 14.200l-5.400-3.100V4.900z" fill="none" stroke="#c3c9cd" stroke-width="1"/><path d="M8 1.800l5.400 9.300H2.600z" fill="none" stroke="#c3c9cd" stroke-width="1"/><circle cx="8" cy="1.800" r="1.300" fill="#c3c9cd"/><circle cx="13.400" cy="4.900" r="1.300" fill="#c3c9cd"/><circle cx="13.400" cy="11.100" r="1.300" fill="#c3c9cd"/><circle cx="8" cy="14.200" r="1.300" fill="#c3c9cd"/><circle cx="2.600" cy="11.100" r="1.300" fill="#c3c9cd"/><circle cx="2.600" cy="4.900" r="1.300" fill="#c3c9cd"/></svg>
<div class="t" style="left:1063.3px;top:1172.90px;height:21px;line-height:21px;font-size:14px;color:#d3d8dc;">GraphQL</div>
<svg class="i" style="left:1149.50px;top:1174.50px;" width="15" height="15" viewBox="0 0 16 16"><circle cx="8" cy="8" r="6.600" fill="#c3c9cd"/><path d="M8 4v5" stroke="#1c2327" stroke-width="1.900"/><circle cx="8" cy="11.600" r="1.100" fill="#1c2327"/></svg>
<div class="t" style="left:1169.8px;top:1172.90px;height:21px;line-height:21px;font-size:14px;color:#d3d8dc;">Problems</div>
<svg class="i" style="left:1266.50px;top:1174.50px;" width="15" height="15" viewBox="0 0 16 16"><rect x="1" y="2.200" width="14" height="11.600" fill="#c3c9cd"/><path d="M3.500 5l3 2.800-3 2.800" fill="none" stroke="#1c2327" stroke-width="1.400"/><path d="M8 11.300h4.500" stroke="#1c2327" stroke-width="1.300"/></svg>
<div class="t" style="left:1287.3px;top:1172.90px;height:21px;line-height:21px;font-size:14px;color:#d3d8dc;">Terminal</div>
<svg class="i" style="left:1383.00px;top:1174.00px;" width="16" height="16" viewBox="0 0 16 16"><path d="M4.500 1.500h7L15 8l-3.500 6.500h-7L1 8z" fill="#c3c9cd"/><path d="M6.300 4.800v6.400L11.300 8z" fill="#1c2327"/></svg>
<div class="t" style="left:1403.3px;top:1172.90px;height:21px;line-height:21px;font-size:14px;color:#d3d8dc;">Services</div>
<svg class="i" style="left:1502.50px;top:1174.00px;" width="16" height="16" viewBox="0 0 16 16"><path d="M5 2.500h6l1.500 3.500v4.500h-9V6z" fill="#c3c9cd"/><path d="M1.500 7.500h13" stroke="#c3c9cd" stroke-width="1.400"/><path d="M4.500 11h7l1.500 3.500h-10z" fill="#c3c9cd"/></svg>
<div class="t" style="left:1522.8px;top:1172.90px;height:21px;line-height:21px;font-size:14px;color:#d3d8dc;">App Inspection</div>
<div class="r" style="left:72px;top:1195.2px;width:1777px;height:1.6px;background:#393a3a;"></div>
<svg class="i" style="left:86.00px;top:1200.50px;" width="16" height="16" viewBox="0 0 16 16"><rect x="4" y="1.500" width="10.500" height="10.500" fill="none" stroke="#c3c9cd" stroke-width="1.100"/><path d="M1.500 4v10.500H12" fill="none" stroke="#c3c9cd" stroke-width="1.100"/></svg>
<div class="t" style="left:125.5px;top:1199.70px;height:21px;line-height:21px;font-size:14px;color:#d3d8dc;">Install successfully finished in 556 ms. (a minute ago)</div>
<div class="t" style="left:1316px;top:1199.70px;height:21px;line-height:21px;font-size:14px;color:#d3d8dc;">96:32</div>
<div class="t" style="left:1373px;top:1199.70px;height:21px;line-height:21px;font-size:14px;color:#d3d8dc;">LF</div>
<div class="t" style="left:1404.5px;top:1199.70px;height:21px;line-height:21px;font-size:14px;color:#d3d8dc;">UTF-8</div>
<svg class="i" style="left:1461.00px;top:1200.00px;" width="16" height="16" viewBox="0 0 16 16"><path d="M1.500 1.500h13v10h-3v3l-3-3h-7z" fill="#c3c9cd"/><path d="M8 3.500v4" stroke="#1c2327" stroke-width="1.700"/><circle cx="8" cy="9.500" r=".9" fill="#1c2327"/></svg>
<div class="t" style="left:1492px;top:1199.70px;height:21px;line-height:21px;font-size:14px;color:#d3d8dc;">4 spaces</div>
<svg class="i" style="left:1573.50px;top:1200.00px;" width="17" height="17" viewBox="0 0 16 16"><circle cx="4.500" cy="2.800" r="1.500" fill="#c3c9cd"/><circle cx="4.500" cy="13.500" r="1.500" fill="#c3c9cd"/><circle cx="11.500" cy="3.500" r="1.500" fill="#c3c9cd"/><path d="M4.500 3v10M11.500 4c0 4-7 3-7 7" fill="none" stroke="#c3c9cd" stroke-width="1.400"/></svg>
<div class="t" style="left:1596.5px;top:1199.70px;height:21px;line-height:21px;font-size:14px;color:#d3d8dc;">odyssey-run</div>
<svg class="i" style="left:1701.00px;top:1200.00px;" width="16" height="16" viewBox="0 0 16 16"><rect x="5.500" y="7.500" width="9" height="7" fill="#c3c9cd"/><path d="M2 7.500V5a2.700 2.700 0 0 1 5.400 0v2.500" fill="none" stroke="#c3c9cd" stroke-width="1.400"/></svg>
<svg class="i" style="left:1731.00px;top:1199.50px;" width="18" height="18" viewBox="0 0 16 16"><path d="M1 2h4.500l2 8L11.500 2H16L9.500 15H5z" fill="#21c68a"/><path d="M5 15l6.500-13H16L9.500 15z" fill="#2a8fd6"/><path d="M1 2h4.500l2 8-2 4z" fill="#2fd0a0"/></svg>
<div class="r" style="left:1756px;top:1196px;width:85.5px;height:25px;background:#a0b55b;"></div>
<div class="t" style="left:1768.5px;top:1198.00px;height:25px;line-height:25px;font-size:16.5px;color:#0d1114;">NORMAL</div>
</div></div>
<div id="winb"></div>
</body></html>
